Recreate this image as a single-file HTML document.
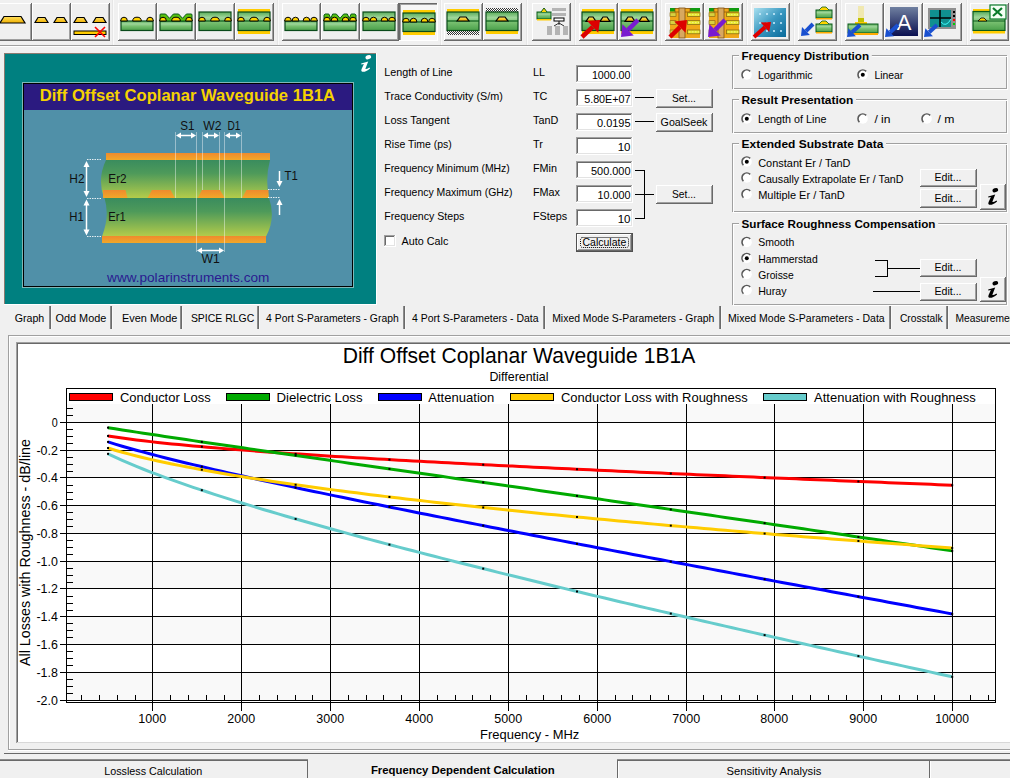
<!DOCTYPE html>
<html><head><meta charset="utf-8"><title>Frequency Dependent Calculation</title>
<style>html,body{margin:0;padding:0;background:#f0f0f0;overflow:hidden}body{width:1010px;height:778px;font-family:"Liberation Sans",sans-serif}svg{display:block}</style>
</head><body>
<svg width="1010" height="778" viewBox="0 0 1010 778" font-family='"Liberation Sans", sans-serif'><rect x="0" y="0" width="1010" height="778" fill="#f0f0f0" />
<rect x="-7" y="3" width="39" height="38" fill="#f0f0f0" />
<rect x="-7" y="3" width="39" height="1" fill="#ffffff" />
<rect x="-7" y="3" width="1" height="38" fill="#ffffff" />
<rect x="-7" y="40" width="39" height="1" fill="#696969" />
<rect x="31" y="3" width="1" height="38" fill="#696969" />
<rect x="-6" y="39" width="37" height="1" fill="#a0a0a0" />
<rect x="30" y="4" width="1" height="36" fill="#a0a0a0" />
<rect x="32" y="3" width="39" height="38" fill="#f0f0f0" />
<rect x="32" y="3" width="39" height="1" fill="#ffffff" />
<rect x="32" y="3" width="1" height="38" fill="#ffffff" />
<rect x="32" y="40" width="39" height="1" fill="#696969" />
<rect x="70" y="3" width="1" height="38" fill="#696969" />
<rect x="33" y="39" width="37" height="1" fill="#a0a0a0" />
<rect x="69" y="4" width="1" height="36" fill="#a0a0a0" />
<rect x="71" y="3" width="39" height="38" fill="#f0f0f0" />
<rect x="71" y="3" width="39" height="1" fill="#ffffff" />
<rect x="71" y="3" width="1" height="38" fill="#ffffff" />
<rect x="71" y="40" width="39" height="1" fill="#696969" />
<rect x="109" y="3" width="1" height="38" fill="#696969" />
<rect x="72" y="39" width="37" height="1" fill="#a0a0a0" />
<rect x="108" y="4" width="1" height="36" fill="#a0a0a0" />
<rect x="118" y="3" width="39" height="38" fill="#f0f0f0" />
<rect x="118" y="3" width="39" height="1" fill="#ffffff" />
<rect x="118" y="3" width="1" height="38" fill="#ffffff" />
<rect x="118" y="40" width="39" height="1" fill="#696969" />
<rect x="156" y="3" width="1" height="38" fill="#696969" />
<rect x="119" y="39" width="37" height="1" fill="#a0a0a0" />
<rect x="155" y="4" width="1" height="36" fill="#a0a0a0" />
<rect x="157" y="3" width="39" height="38" fill="#f0f0f0" />
<rect x="157" y="3" width="39" height="1" fill="#ffffff" />
<rect x="157" y="3" width="1" height="38" fill="#ffffff" />
<rect x="157" y="40" width="39" height="1" fill="#696969" />
<rect x="195" y="3" width="1" height="38" fill="#696969" />
<rect x="158" y="39" width="37" height="1" fill="#a0a0a0" />
<rect x="194" y="4" width="1" height="36" fill="#a0a0a0" />
<rect x="196" y="3" width="39" height="38" fill="#f0f0f0" />
<rect x="196" y="3" width="39" height="1" fill="#ffffff" />
<rect x="196" y="3" width="1" height="38" fill="#ffffff" />
<rect x="196" y="40" width="39" height="1" fill="#696969" />
<rect x="234" y="3" width="1" height="38" fill="#696969" />
<rect x="197" y="39" width="37" height="1" fill="#a0a0a0" />
<rect x="233" y="4" width="1" height="36" fill="#a0a0a0" />
<rect x="235" y="3" width="39" height="38" fill="#f0f0f0" />
<rect x="235" y="3" width="39" height="1" fill="#ffffff" />
<rect x="235" y="3" width="1" height="38" fill="#ffffff" />
<rect x="235" y="40" width="39" height="1" fill="#696969" />
<rect x="273" y="3" width="1" height="38" fill="#696969" />
<rect x="236" y="39" width="37" height="1" fill="#a0a0a0" />
<rect x="272" y="4" width="1" height="36" fill="#a0a0a0" />
<rect x="282" y="3" width="39" height="38" fill="#f0f0f0" />
<rect x="282" y="3" width="39" height="1" fill="#ffffff" />
<rect x="282" y="3" width="1" height="38" fill="#ffffff" />
<rect x="282" y="40" width="39" height="1" fill="#696969" />
<rect x="320" y="3" width="1" height="38" fill="#696969" />
<rect x="283" y="39" width="37" height="1" fill="#a0a0a0" />
<rect x="319" y="4" width="1" height="36" fill="#a0a0a0" />
<rect x="321" y="3" width="39" height="38" fill="#f0f0f0" />
<rect x="321" y="3" width="39" height="1" fill="#ffffff" />
<rect x="321" y="3" width="1" height="38" fill="#ffffff" />
<rect x="321" y="40" width="39" height="1" fill="#696969" />
<rect x="359" y="3" width="1" height="38" fill="#696969" />
<rect x="322" y="39" width="37" height="1" fill="#a0a0a0" />
<rect x="358" y="4" width="1" height="36" fill="#a0a0a0" />
<rect x="360" y="3" width="39" height="38" fill="#f0f0f0" />
<rect x="360" y="3" width="39" height="1" fill="#ffffff" />
<rect x="360" y="3" width="1" height="38" fill="#ffffff" />
<rect x="360" y="40" width="39" height="1" fill="#696969" />
<rect x="398" y="3" width="1" height="38" fill="#696969" />
<rect x="361" y="39" width="37" height="1" fill="#a0a0a0" />
<rect x="397" y="4" width="1" height="36" fill="#a0a0a0" />
<rect x="399" y="3" width="39" height="38" fill="#f6f6f6" />
<rect x="399" y="3" width="39" height="1" fill="#696969" />
<rect x="399" y="3" width="1" height="38" fill="#696969" />
<rect x="400" y="4" width="37" height="1" fill="#a0a0a0" />
<rect x="400" y="4" width="1" height="36" fill="#a0a0a0" />
<rect x="399" y="40" width="39" height="1" fill="#ffffff" />
<rect x="437" y="3" width="1" height="38" fill="#ffffff" />
<rect x="444" y="3" width="39" height="38" fill="#f0f0f0" />
<rect x="444" y="3" width="39" height="1" fill="#ffffff" />
<rect x="444" y="3" width="1" height="38" fill="#ffffff" />
<rect x="444" y="40" width="39" height="1" fill="#696969" />
<rect x="482" y="3" width="1" height="38" fill="#696969" />
<rect x="445" y="39" width="37" height="1" fill="#a0a0a0" />
<rect x="481" y="4" width="1" height="36" fill="#a0a0a0" />
<rect x="483" y="3" width="39" height="38" fill="#f0f0f0" />
<rect x="483" y="3" width="39" height="1" fill="#ffffff" />
<rect x="483" y="3" width="1" height="38" fill="#ffffff" />
<rect x="483" y="40" width="39" height="1" fill="#696969" />
<rect x="521" y="3" width="1" height="38" fill="#696969" />
<rect x="484" y="39" width="37" height="1" fill="#a0a0a0" />
<rect x="520" y="4" width="1" height="36" fill="#a0a0a0" />
<rect x="532" y="3" width="39" height="38" fill="#f0f0f0" />
<rect x="532" y="3" width="39" height="1" fill="#ffffff" />
<rect x="532" y="3" width="1" height="38" fill="#ffffff" />
<rect x="532" y="40" width="39" height="1" fill="#696969" />
<rect x="570" y="3" width="1" height="38" fill="#696969" />
<rect x="533" y="39" width="37" height="1" fill="#a0a0a0" />
<rect x="569" y="4" width="1" height="36" fill="#a0a0a0" />
<rect x="579" y="3" width="39" height="38" fill="#f0f0f0" />
<rect x="579" y="3" width="39" height="1" fill="#ffffff" />
<rect x="579" y="3" width="1" height="38" fill="#ffffff" />
<rect x="579" y="40" width="39" height="1" fill="#696969" />
<rect x="617" y="3" width="1" height="38" fill="#696969" />
<rect x="580" y="39" width="37" height="1" fill="#a0a0a0" />
<rect x="616" y="4" width="1" height="36" fill="#a0a0a0" />
<rect x="618" y="3" width="39" height="38" fill="#f0f0f0" />
<rect x="618" y="3" width="39" height="1" fill="#ffffff" />
<rect x="618" y="3" width="1" height="38" fill="#ffffff" />
<rect x="618" y="40" width="39" height="1" fill="#696969" />
<rect x="656" y="3" width="1" height="38" fill="#696969" />
<rect x="619" y="39" width="37" height="1" fill="#a0a0a0" />
<rect x="655" y="4" width="1" height="36" fill="#a0a0a0" />
<rect x="665" y="3" width="39" height="38" fill="#f0f0f0" />
<rect x="665" y="3" width="39" height="1" fill="#ffffff" />
<rect x="665" y="3" width="1" height="38" fill="#ffffff" />
<rect x="665" y="40" width="39" height="1" fill="#696969" />
<rect x="703" y="3" width="1" height="38" fill="#696969" />
<rect x="666" y="39" width="37" height="1" fill="#a0a0a0" />
<rect x="702" y="4" width="1" height="36" fill="#a0a0a0" />
<rect x="704" y="3" width="39" height="38" fill="#f0f0f0" />
<rect x="704" y="3" width="39" height="1" fill="#ffffff" />
<rect x="704" y="3" width="1" height="38" fill="#ffffff" />
<rect x="704" y="40" width="39" height="1" fill="#696969" />
<rect x="742" y="3" width="1" height="38" fill="#696969" />
<rect x="705" y="39" width="37" height="1" fill="#a0a0a0" />
<rect x="741" y="4" width="1" height="36" fill="#a0a0a0" />
<rect x="751" y="3" width="39" height="38" fill="#f0f0f0" />
<rect x="751" y="3" width="39" height="1" fill="#ffffff" />
<rect x="751" y="3" width="1" height="38" fill="#ffffff" />
<rect x="751" y="40" width="39" height="1" fill="#696969" />
<rect x="789" y="3" width="1" height="38" fill="#696969" />
<rect x="752" y="39" width="37" height="1" fill="#a0a0a0" />
<rect x="788" y="4" width="1" height="36" fill="#a0a0a0" />
<rect x="798" y="3" width="39" height="38" fill="#f0f0f0" />
<rect x="798" y="3" width="39" height="1" fill="#ffffff" />
<rect x="798" y="3" width="1" height="38" fill="#ffffff" />
<rect x="798" y="40" width="39" height="1" fill="#696969" />
<rect x="836" y="3" width="1" height="38" fill="#696969" />
<rect x="799" y="39" width="37" height="1" fill="#a0a0a0" />
<rect x="835" y="4" width="1" height="36" fill="#a0a0a0" />
<rect x="845" y="3" width="39" height="38" fill="#f0f0f0" />
<rect x="845" y="3" width="39" height="1" fill="#ffffff" />
<rect x="845" y="3" width="1" height="38" fill="#ffffff" />
<rect x="845" y="40" width="39" height="1" fill="#696969" />
<rect x="883" y="3" width="1" height="38" fill="#696969" />
<rect x="846" y="39" width="37" height="1" fill="#a0a0a0" />
<rect x="882" y="4" width="1" height="36" fill="#a0a0a0" />
<rect x="884" y="3" width="39" height="38" fill="#f0f0f0" />
<rect x="884" y="3" width="39" height="1" fill="#ffffff" />
<rect x="884" y="3" width="1" height="38" fill="#ffffff" />
<rect x="884" y="40" width="39" height="1" fill="#696969" />
<rect x="922" y="3" width="1" height="38" fill="#696969" />
<rect x="885" y="39" width="37" height="1" fill="#a0a0a0" />
<rect x="921" y="4" width="1" height="36" fill="#a0a0a0" />
<rect x="923" y="3" width="39" height="38" fill="#f0f0f0" />
<rect x="923" y="3" width="39" height="1" fill="#ffffff" />
<rect x="923" y="3" width="1" height="38" fill="#ffffff" />
<rect x="923" y="40" width="39" height="1" fill="#696969" />
<rect x="961" y="3" width="1" height="38" fill="#696969" />
<rect x="924" y="39" width="37" height="1" fill="#a0a0a0" />
<rect x="960" y="4" width="1" height="36" fill="#a0a0a0" />
<rect x="970" y="3" width="39" height="38" fill="#f0f0f0" />
<rect x="970" y="3" width="39" height="1" fill="#ffffff" />
<rect x="970" y="3" width="1" height="38" fill="#ffffff" />
<rect x="970" y="40" width="39" height="1" fill="#696969" />
<rect x="1008" y="3" width="1" height="38" fill="#696969" />
<rect x="971" y="39" width="37" height="1" fill="#a0a0a0" />
<rect x="1007" y="4" width="1" height="36" fill="#a0a0a0" />
<rect x="112" y="0" width="1" height="45" fill="#e6e6e6" />
<rect x="113" y="0" width="1" height="45" fill="#fafafa" />
<rect x="277" y="0" width="1" height="45" fill="#e6e6e6" />
<rect x="278" y="0" width="1" height="45" fill="#fafafa" />
<rect x="440" y="0" width="1" height="45" fill="#e6e6e6" />
<rect x="441" y="0" width="1" height="45" fill="#fafafa" />
<rect x="526" y="0" width="1" height="45" fill="#e6e6e6" />
<rect x="527" y="0" width="1" height="45" fill="#fafafa" />
<rect x="574" y="0" width="1" height="45" fill="#e6e6e6" />
<rect x="575" y="0" width="1" height="45" fill="#fafafa" />
<rect x="660" y="0" width="1" height="45" fill="#e6e6e6" />
<rect x="661" y="0" width="1" height="45" fill="#fafafa" />
<rect x="746" y="0" width="1" height="45" fill="#e6e6e6" />
<rect x="747" y="0" width="1" height="45" fill="#fafafa" />
<rect x="793" y="0" width="1" height="45" fill="#e6e6e6" />
<rect x="794" y="0" width="1" height="45" fill="#fafafa" />
<rect x="840" y="0" width="1" height="45" fill="#e6e6e6" />
<rect x="841" y="0" width="1" height="45" fill="#fafafa" />
<rect x="966" y="0" width="1" height="45" fill="#e6e6e6" />
<rect x="967" y="0" width="1" height="45" fill="#fafafa" />
<rect x="0" y="45" width="1010" height="1" fill="#a0a0a0" />
<rect x="0" y="46" width="1010" height="1" fill="#ffffff" />
<polygon points="0,23 4,16.5 21,16.5 25,23" fill="url(#gy)" stroke="#000" stroke-width="1.2"/>
<polygon points="35,22.5 38,17.5 45,17.5 48,22.5" fill="url(#gy)" stroke="#000" stroke-width="1.2"/>
<polygon points="54,22.5 57,17.5 64,17.5 67,22.5" fill="url(#gy)" stroke="#000" stroke-width="1.2"/>
<polygon points="74,22.5 77,17.5 84,17.5 87,22.5" fill="url(#gy)" stroke="#000" stroke-width="1.2"/>
<polygon points="93,22.5 96,17.5 103,17.5 106,22.5" fill="url(#gy)" stroke="#000" stroke-width="1.2"/>
<rect x="74" y="31" width="32" height="3.5" fill="#ffcc00" stroke="#000" stroke-width="1"/>
<path d="M95,27 L105,37 M105,27 L95,37" stroke="#ff0000" stroke-width="1.6"/>
<rect x="121" y="21" width="32" height="9.5" fill="url(#gg)" stroke="#0a4a1a" stroke-width="1.2"/><path d="M120.6,21 A3.4,3.8 0 0 1 127.4,21 z" fill="#ffd400" stroke="#000" stroke-width="1"/><path d="M132.7,21 A4.3,3.8 0 0 1 141.3,21 z" fill="#ffd400" stroke="#000" stroke-width="1"/><path d="M146.6,21 A3.4,3.8 0 0 1 153.4,21 z" fill="#ffd400" stroke="#000" stroke-width="1"/>
<rect x="160" y="21" width="32" height="9.5" fill="url(#gg)" stroke="#0a4a1a" stroke-width="1.2"/><path d="M160,21 L160,15 L160.4,14 L165.6,14 L169.5,18.3 L173.4,14 L178.6,14 L182.5,18.3 L186.4,14 L191.6,14 L192,15 L192,21 z" fill="#58c010" stroke="#0a5a1a" stroke-width="1" stroke-linejoin="round"/><path d="M159.6,21 A3.4,3.8 0 0 1 166.4,21 z" fill="#ffd400" stroke="#000" stroke-width="1"/><path d="M171.7,21 A4.3,3.8 0 0 1 180.3,21 z" fill="#ffd400" stroke="#000" stroke-width="1"/><path d="M185.6,21 A3.4,3.8 0 0 1 192.4,21 z" fill="#ffd400" stroke="#000" stroke-width="1"/>
<rect x="199" y="12" width="32" height="18.5" fill="url(#gg)" stroke="#0a4a1a" stroke-width="1.2"/><line x1="199" y1="21" x2="231" y2="21" stroke="#0a5a1a" stroke-width="1.2"/><path d="M198.6,21 A3.4,3.8 0 0 1 205.4,21 z" fill="#ffd400" stroke="#000" stroke-width="1"/><path d="M210.7,21 A4.3,3.8 0 0 1 219.3,21 z" fill="#ffd400" stroke="#000" stroke-width="1"/><path d="M224.6,21 A3.4,3.8 0 0 1 231.4,21 z" fill="#ffd400" stroke="#000" stroke-width="1"/>
<rect x="238" y="9" width="32" height="3" fill="#ffcc00"/><rect x="238" y="31" width="32" height="3" fill="#ffcc00"/><rect x="238" y="12" width="32" height="18.5" fill="url(#gg)" stroke="#0a4a1a" stroke-width="1.2"/><line x1="238" y1="21" x2="270" y2="21" stroke="#0a5a1a" stroke-width="1.2"/><path d="M237.6,21 A3.4,3.8 0 0 1 244.4,21 z" fill="#ffd400" stroke="#000" stroke-width="1"/><path d="M249.7,21 A4.3,3.8 0 0 1 258.3,21 z" fill="#ffd400" stroke="#000" stroke-width="1"/><path d="M263.6,21 A3.4,3.8 0 0 1 270.4,21 z" fill="#ffd400" stroke="#000" stroke-width="1"/>
<rect x="285" y="21" width="32" height="9.5" fill="url(#gg)" stroke="#0a4a1a" stroke-width="1.2"/><path d="M284.6,21 A3.4,3.8 0 0 1 291.4,21 z" fill="#ffd400" stroke="#000" stroke-width="1"/><path d="M292.1,21 A3.4,3.8 0 0 1 298.9,21 z" fill="#ffd400" stroke="#000" stroke-width="1"/><path d="M303.1,21 A3.4,3.8 0 0 1 309.9,21 z" fill="#ffd400" stroke="#000" stroke-width="1"/><path d="M310.6,21 A3.4,3.8 0 0 1 317.4,21 z" fill="#ffd400" stroke="#000" stroke-width="1"/>
<rect x="324" y="21" width="32" height="9.5" fill="url(#gg)" stroke="#0a4a1a" stroke-width="1.2"/><path d="M324,21 L324,15 L325.2,14 L328.8,14 L330.75,18.3 L332.7,14 L336.3,14 L340.0,18.3 L343.7,14 L347.3,14 L349.25,18.3 L351.2,14 L354.8,14 L356,15 L356,21 z" fill="#58c010" stroke="#0a5a1a" stroke-width="1" stroke-linejoin="round"/><path d="M323.6,21 A3.4,3.8 0 0 1 330.4,21 z" fill="#ffd400" stroke="#000" stroke-width="1"/><path d="M331.1,21 A3.4,3.8 0 0 1 337.9,21 z" fill="#ffd400" stroke="#000" stroke-width="1"/><path d="M342.1,21 A3.4,3.8 0 0 1 348.9,21 z" fill="#ffd400" stroke="#000" stroke-width="1"/><path d="M349.6,21 A3.4,3.8 0 0 1 356.4,21 z" fill="#ffd400" stroke="#000" stroke-width="1"/>
<rect x="363" y="12" width="32" height="18.5" fill="url(#gg)" stroke="#0a4a1a" stroke-width="1.2"/><line x1="363" y1="21" x2="395" y2="21" stroke="#0a5a1a" stroke-width="1.2"/><path d="M362.6,21 A3.4,3.8 0 0 1 369.4,21 z" fill="#ffd400" stroke="#000" stroke-width="1"/><path d="M370.1,21 A3.4,3.8 0 0 1 376.9,21 z" fill="#ffd400" stroke="#000" stroke-width="1"/><path d="M381.1,21 A3.4,3.8 0 0 1 387.9,21 z" fill="#ffd400" stroke="#000" stroke-width="1"/><path d="M388.6,21 A3.4,3.8 0 0 1 395.4,21 z" fill="#ffd400" stroke="#000" stroke-width="1"/>
<rect x="403" y="10" width="32" height="3" fill="#ffcc00"/><rect x="403" y="32" width="32" height="3" fill="#ffcc00"/><rect x="403" y="13" width="32" height="18.5" fill="url(#gg)" stroke="#0a4a1a" stroke-width="1.2"/><line x1="403" y1="22" x2="435" y2="22" stroke="#0a5a1a" stroke-width="1.2"/><path d="M402.6,22 A3.4,3.8 0 0 1 409.4,22 z" fill="#ffd400" stroke="#000" stroke-width="1"/><path d="M410.1,22 A3.4,3.8 0 0 1 416.9,22 z" fill="#ffd400" stroke="#000" stroke-width="1"/><path d="M421.1,22 A3.4,3.8 0 0 1 427.9,22 z" fill="#ffd400" stroke="#000" stroke-width="1"/><path d="M428.6,22 A3.4,3.8 0 0 1 435.4,22 z" fill="#ffd400" stroke="#000" stroke-width="1"/>
<rect x="447" y="9" width="32" height="3" fill="#ffcc00"/><rect x="447" y="31" width="32" height="4" fill="url(#hatch)"/><rect x="447" y="12" width="32" height="18.5" fill="url(#gg)" stroke="#0a4a1a" stroke-width="1.2"/><line x1="447" y1="21" x2="479" y2="21" stroke="#0a5a1a" stroke-width="1.2"/><polygon points="457.0,21 460.0,17 466.0,17 469.0,21" fill="url(#gy)" stroke="#000" stroke-width="1.2"/>
<rect x="486" y="8" width="32" height="4" fill="url(#hatch)"/><rect x="486" y="31" width="32" height="3" fill="#ffcc00"/><rect x="486" y="12" width="32" height="18.5" fill="url(#gg)" stroke="#0a4a1a" stroke-width="1.2"/><line x1="486" y1="21" x2="518" y2="21" stroke="#0a5a1a" stroke-width="1.2"/><polygon points="496.0,21 499.0,17 505.0,17 508.0,21" fill="url(#gy)" stroke="#000" stroke-width="1.2"/>
<rect x="537" y="12" width="14" height="7" fill="url(#gg)" stroke="#0a5a1a" stroke-width="1"/>
<rect x="537" y="19" width="14" height="1.5" fill="#ffcc00"/>
<path d="M541,12 l3,-4 l3,4" fill="#ffd400" stroke="#0a5a1a" stroke-width="1"/>
<rect x="552" y="8" width="14" height="3" fill="#b4b4b4"/><rect x="552" y="13" width="14" height="3" fill="#b4b4b4"/>
<rect x="554" y="18" width="10" height="3" fill="#fff" stroke="#000" stroke-width="1"/>
<path d="M559,21 v4 M559,23 l-5,3 M559,23 l5,3" stroke="#000" stroke-width="0.8" fill="none"/>
<rect x="547" y="26" width="5" height="9" fill="#b4b4b4"/><rect x="555" y="26" width="5" height="9" fill="#b4b4b4"/><rect x="563" y="26" width="5" height="9" fill="#b4b4b4"/>
<rect x="582" y="9" width="32" height="3" fill="#ffcc00"/><rect x="582" y="31" width="32" height="3" fill="#ffcc00"/><rect x="582" y="12" width="32" height="18.5" fill="url(#gg)" stroke="#0a4a1a" stroke-width="1.2"/><line x1="582" y1="21" x2="614" y2="21" stroke="#0a5a1a" stroke-width="1.2"/><polygon points="586,21.3 589,17 593,17 596,21.3" fill="url(#gy)" stroke="#000" stroke-width="1.2"/><polygon points="600,21.3 603,17 607,17 610,21.3" fill="url(#gy)" stroke="#000" stroke-width="1.2"/>
<line x1="582" y1="37" x2="592.7298684745018" y2="26.866235329637163" stroke="#dd0000" stroke-width="4.5"/><polygon points="600,20 598.2228567382116,32.682340550035704 587.236880210792,21.050130109238623" fill="#dd0000"/>
<rect x="621" y="9" width="32" height="3" fill="#ffcc00"/><rect x="621" y="31" width="32" height="3" fill="#ffcc00"/><rect x="621" y="12" width="32" height="18.5" fill="url(#gg)" stroke="#0a4a1a" stroke-width="1.2"/><line x1="621" y1="21" x2="653" y2="21" stroke="#0a5a1a" stroke-width="1.2"/><polygon points="625,21.3 628,17 632,17 635,21.3" fill="url(#gy)" stroke="#000" stroke-width="1.2"/><polygon points="639,21.3 642,17 646,17 649,21.3" fill="url(#gy)" stroke="#000" stroke-width="1.2"/>
<line x1="638" y1="20" x2="628.0710678118654" y2="29.928932188134524" stroke="#7a1ad0" stroke-width="4.5"/><polygon points="621,37 622.414213562373,24.272077938642145 633.7279220613578,35.58578643762691" fill="#7a1ad0"/>
<rect x="670" y="8" width="30" height="30" fill="#f0a818"/>
<rect x="670" y="8" width="6" height="3.5" fill="#109a10"/><rect x="690" y="8" width="10" height="3.5" fill="#109a10"/>
<rect x="675" y="8.5" width="15" height="3.5" fill="#f0a818" stroke="#805010" stroke-width="0.7"/>
<rect x="670" y="12.8" width="6" height="3.6" fill="#d8d040" stroke="#806010" stroke-width="0.6"/><rect x="687.5" y="12.8" width="12.5" height="3.8" fill="#e8e830" stroke="#806010" stroke-width="0.7"/>
<line x1="689" y1="14.700000000000001" x2="699" y2="14.700000000000001" stroke="#f8f8c0" stroke-width="0.6" stroke-dasharray="1.5,1.5"/>
<rect x="670" y="20.7" width="6" height="3.6" fill="#d8d040" stroke="#806010" stroke-width="0.6"/><rect x="687.5" y="20.7" width="12.5" height="3.8" fill="#e8e830" stroke="#806010" stroke-width="0.7"/>
<line x1="689" y1="22.599999999999998" x2="699" y2="22.599999999999998" stroke="#f8f8c0" stroke-width="0.6" stroke-dasharray="1.5,1.5"/>
<rect x="670" y="30" width="6" height="3.6" fill="#d8d040" stroke="#806010" stroke-width="0.6"/><rect x="687.5" y="30" width="12.5" height="3.8" fill="#e8e830" stroke="#806010" stroke-width="0.7"/>
<line x1="689" y1="31.9" x2="699" y2="31.9" stroke="#f8f8c0" stroke-width="0.6" stroke-dasharray="1.5,1.5"/>
<rect x="679" y="8" width="6" height="30" fill="#d8a860" stroke="#805010" stroke-width="0.8"/>
<line x1="670" y1="37" x2="679.9289321881345" y2="27.071067811865476" stroke="#dd0000" stroke-width="4.5"/><polygon points="687,20 685.5857864376269,32.72792206135786 674.272077938642,21.414213562373096" fill="#dd0000"/>
<rect x="709" y="8" width="30" height="30" fill="#f0a818"/>
<rect x="709" y="8" width="6" height="3.5" fill="#109a10"/><rect x="729" y="8" width="10" height="3.5" fill="#109a10"/>
<rect x="714" y="8.5" width="15" height="3.5" fill="#f0a818" stroke="#805010" stroke-width="0.7"/>
<rect x="709" y="12.8" width="6" height="3.6" fill="#d8d040" stroke="#806010" stroke-width="0.6"/><rect x="726.5" y="12.8" width="12.5" height="3.8" fill="#e8e830" stroke="#806010" stroke-width="0.7"/>
<line x1="728" y1="14.700000000000001" x2="738" y2="14.700000000000001" stroke="#f8f8c0" stroke-width="0.6" stroke-dasharray="1.5,1.5"/>
<rect x="709" y="20.7" width="6" height="3.6" fill="#d8d040" stroke="#806010" stroke-width="0.6"/><rect x="726.5" y="20.7" width="12.5" height="3.8" fill="#e8e830" stroke="#806010" stroke-width="0.7"/>
<line x1="728" y1="22.599999999999998" x2="738" y2="22.599999999999998" stroke="#f8f8c0" stroke-width="0.6" stroke-dasharray="1.5,1.5"/>
<rect x="709" y="30" width="6" height="3.6" fill="#d8d040" stroke="#806010" stroke-width="0.6"/><rect x="726.5" y="30" width="12.5" height="3.8" fill="#e8e830" stroke="#806010" stroke-width="0.7"/>
<line x1="728" y1="31.9" x2="738" y2="31.9" stroke="#f8f8c0" stroke-width="0.6" stroke-dasharray="1.5,1.5"/>
<rect x="718" y="8" width="6" height="30" fill="#d8a860" stroke="#805010" stroke-width="0.8"/>
<line x1="725" y1="20" x2="715.0710678118654" y2="29.928932188134524" stroke="#7a1ad0" stroke-width="4.5"/><polygon points="708,37 709.414213562373,24.272077938642145 720.7279220613578,35.58578643762691" fill="#7a1ad0"/>
<defs><linearGradient id="bb" x1="0" y1="0" x2="1" y2="1"><stop offset="0" stop-color="#a8e0f0"/><stop offset="0.5" stop-color="#3a98c0"/><stop offset="1" stop-color="#0a6a9a"/></linearGradient></defs>
<rect x="754" y="8" width="32" height="29" fill="url(#bb)"/>
<circle cx="760" cy="14" r="1" fill="#cfefff"/>
<circle cx="767" cy="14" r="1" fill="#cfefff"/>
<circle cx="774" cy="14" r="1" fill="#cfefff"/>
<circle cx="781" cy="14" r="1" fill="#cfefff"/>
<circle cx="760" cy="23" r="1" fill="#cfefff"/>
<circle cx="767" cy="23" r="1" fill="#cfefff"/>
<circle cx="774" cy="23" r="1" fill="#cfefff"/>
<circle cx="781" cy="23" r="1" fill="#cfefff"/>
<circle cx="760" cy="31" r="1" fill="#cfefff"/>
<circle cx="767" cy="31" r="1" fill="#cfefff"/>
<circle cx="774" cy="31" r="1" fill="#cfefff"/>
<circle cx="781" cy="31" r="1" fill="#cfefff"/>
<line x1="754" y1="37" x2="765.0012971570793" y2="27.292973096694773" stroke="#dd0000" stroke-width="4"/><polygon points="771,22 769.2356756344351,32.09193537103137 760.7669186797235,22.49401082235818" fill="#dd0000"/>
<rect x="816" y="10" width="16" height="8" fill="url(#gg)" stroke="#0a5a1a" stroke-width="1"/>
<path d="M819,10 l3,-3 l4,0 l3,3" fill="#ffd400" stroke="#0a5a1a" stroke-width="0.8"/>
<rect x="816" y="18" width="16" height="1.5" fill="#ffaa00"/>
<rect x="816" y="24" width="16" height="8" fill="url(#gg)" stroke="#0a5a1a" stroke-width="1"/>
<path d="M819,24 l3,-3 l4,0 l3,3" fill="#ffd400" stroke="#0a5a1a" stroke-width="0.8"/>
<rect x="816" y="32" width="16" height="1.5" fill="#ffaa00"/>
<line x1="813" y1="24" x2="805.9497474683059" y2="31.050252531694166" stroke="#1a50d0" stroke-width="4"/><polygon points="801,36 801.9899494936612,27.0904545570495 809.9095454429505,35.01005050633883" fill="#1a50d0"/>
<rect x="858" y="6" width="6" height="12" fill="#f0e8b0"/>
<rect x="858" y="18" width="6" height="4" fill="#c0c000"/>
<rect x="855" y="22" width="12" height="2" fill="#ffcc00"/>
<rect x="848" y="24" width="30" height="9" fill="url(#gg)" stroke="#0a5a1a" stroke-width="1"/>
<rect x="848" y="33" width="30" height="2" fill="#ffaa00"/>
<line x1="860" y1="25" x2="852.1436241123924" y2="32.252039280868544" stroke="#1a50d0" stroke-width="4"/><polygon points="847,37 848.3452555370873,28.137139990954612 855.9419926876976,36.36693857078248" fill="#1a50d0"/>
<defs><linearGradient id="na" x1="0" y1="0" x2="0" y2="1"><stop offset="0" stop-color="#7080a0"/><stop offset="1" stop-color="#0a1050"/></linearGradient></defs>
<rect x="890" y="7" width="28" height="29" fill="url(#na)"/>
<text x="904" y="30" font-size="22" font-weight="400" fill="#fff" text-anchor="middle">A</text>
<line x1="898" y1="25" x2="890.1436241123924" y2="32.252039280868544" stroke="#1a50d0" stroke-width="4"/><polygon points="885,37 886.3452555370873,28.137139990954612 893.9419926876976,36.36693857078248" fill="#1a50d0"/>
<rect x="928" y="8" width="28" height="21" fill="#909090"/>
<rect x="930" y="10" width="21" height="17" fill="#109090"/>
<path d="M940,10 v17 M930,18 h21" stroke="#000" stroke-width="1.5"/>
<path d="M941,22 q5,6 10,-3" stroke="#40ffff" stroke-width="1" fill="none"/>
<rect x="953" y="11" width="2" height="2" fill="#000"/><rect x="953" y="15" width="2" height="2" fill="#000"/><rect x="953" y="19" width="2" height="2" fill="#ff0000"/><rect x="953" y="23" width="2" height="2" fill="#00cc00"/>
<line x1="937" y1="25" x2="929.1436241123924" y2="32.252039280868544" stroke="#1a50d0" stroke-width="4"/><polygon points="924,37 925.3452555370873,28.137139990954612 932.9419926876976,36.36693857078248" fill="#1a50d0"/>
<rect x="973" y="9" width="32" height="2.5" fill="#ffcc00"/>
<rect x="973" y="11.5" width="32" height="19" fill="url(#gg)" stroke="#0a5a1a" stroke-width="1.2"/>
<line x1="973" y1="21" x2="1005" y2="21" stroke="#0a5a1a" stroke-width="1"/>
<path d="M978,21 l3,-3 l3,0 l3,3 z" fill="#ffd400" stroke="#000" stroke-width="0.8"/>
<rect x="973" y="31" width="32" height="2.5" fill="#ffcc00"/>
<rect x="990" y="5" width="16" height="14" fill="#f4fff4" stroke="#0a7a2a" stroke-width="1.2"/>
<path d="M993,8 l9,8 M1002,8 l-9,8" stroke="#0a7a2a" stroke-width="2.2"/>
<rect x="4" y="53" width="372" height="251" fill="#008080" />
<rect x="4" y="53" width="372" height="1" fill="#8a7a70" />
<rect x="4" y="53" width="1" height="251" fill="#8a7a70" />
<rect x="4" y="304" width="373" height="1" fill="#ffffff" />
<rect x="376" y="53" width="1" height="252" fill="#ffffff" />
<g transform="translate(360,55) scale(1.0)" fill="#ffffff"><ellipse cx="8.3" cy="2.2" rx="2.9" ry="2.0" transform="rotate(-20 8.3 2.2)"/><path d="M1.2,8.4 L8.2,6.6 L5.4,13.8 Q5.9,14.7 9.5,12.4 L10.1,13.4 Q5.6,17.3 2.3,16.8 Q0.7,16.2 1.5,14.2 L3.9,9.1 L1.3,9.5 z"/></g>
<rect x="24" y="84" width="1" height="202" fill="#78acc4" />
<rect x="22" y="82" width="332" height="206" fill="#7fb8b8" />
<rect x="23" y="83" width="330" height="204" fill="#000000" />
<rect x="24" y="84" width="328" height="26" fill="#2b1a80" />
<rect x="24" y="110" width="328" height="176" fill="#5090a8" />
<text x="39.7" y="101.2" font-size="16" font-weight="700" fill="#f5d200" text-anchor="start"  textLength="295.4" lengthAdjust="spacingAndGlyphs">Diff Offset Coplanar Waveguide 1B1A</text>
<defs>
<linearGradient id="gy" x1="0" y1="0" x2="0" y2="1"><stop offset="0" stop-color="#ffe060"/><stop offset="1" stop-color="#f0b000"/></linearGradient>
<linearGradient id="gg" x1="0" y1="0" x2="0" y2="1"><stop offset="0" stop-color="#5aac5a"/><stop offset="0.3" stop-color="#9ed69a"/><stop offset="0.55" stop-color="#78c070"/><stop offset="1" stop-color="#4aa04a"/></linearGradient>
<pattern id="hatch" width="2" height="2" patternUnits="userSpaceOnUse"><rect width="2" height="2" fill="#fff"/><rect width="1" height="1" fill="#333"/><rect x="1" y="1" width="1" height="1" fill="#333"/></pattern>
<linearGradient id="cu" x1="0" y1="0" x2="0" y2="1"><stop offset="0" stop-color="#ee8a2e"/><stop offset="1" stop-color="#f2a828"/></linearGradient>
<linearGradient id="die" x1="0" y1="0" x2="0" y2="1"><stop offset="0" stop-color="#3a8c5e"/><stop offset="0.35" stop-color="#4e9a5a"/><stop offset="1" stop-color="#b4cc4a"/></linearGradient>
</defs>
<path d="M106,160 L270,160 Q265,179 269,198 L104,198 Q97,179 106,160 z" fill="url(#die)"/>
<path d="M104.5,198 L269,198 Q276,218 266,236.5 L102,236.5 Q110,216 104.5,198 z" fill="url(#die)"/>
<rect x="106" y="153" width="164" height="7" fill="url(#cu)"/>
<rect x="102" y="236" width="164" height="7" fill="url(#cu)"/>
<polygon points="103,198 103,190 125.5,190 127.5,198" fill="url(#cu)"/>
<polygon points="147.5,198 152,190 170.5,190 175,198" fill="url(#cu)"/>
<polygon points="197.7,198 202,190 220,190 224.7,198" fill="url(#cu)"/>
<polygon points="242,198 246.5,190 268.5,190 268.5,198" fill="url(#cu)"/>
<line x1="175.5" y1="132.5" x2="175.5" y2="198" stroke="#ffffff" stroke-width="1" stroke-dasharray="1,1" opacity="0.85"/>
<line x1="196.5" y1="132.5" x2="196.5" y2="252" stroke="#ffffff" stroke-width="1" stroke-dasharray="1,1" opacity="0.85"/>
<line x1="202.5" y1="132.5" x2="202.5" y2="190" stroke="#ffffff" stroke-width="1" stroke-dasharray="1,1" opacity="0.85"/>
<line x1="219.5" y1="132.5" x2="219.5" y2="190" stroke="#ffffff" stroke-width="1" stroke-dasharray="1,1" opacity="0.85"/>
<line x1="224.5" y1="132.5" x2="224.5" y2="252" stroke="#ffffff" stroke-width="1" stroke-dasharray="1,1" opacity="0.85"/>
<line x1="241.5" y1="132.5" x2="241.5" y2="198" stroke="#ffffff" stroke-width="1" stroke-dasharray="1,1" opacity="0.85"/>
<line x1="179" y1="135.5" x2="193" y2="135.5" stroke="#fff" stroke-width="1.5"/>
<polygon points="176,135.5 181,132.5 181,138.5" fill="#fff"/><polygon points="196,135.5 191,132.5 191,138.5" fill="#fff"/>
<line x1="206" y1="135.5" x2="216" y2="135.5" stroke="#fff" stroke-width="1.5"/>
<polygon points="203,135.5 208,132.5 208,138.5" fill="#fff"/><polygon points="219,135.5 214,132.5 214,138.5" fill="#fff"/>
<line x1="228" y1="135.5" x2="238" y2="135.5" stroke="#fff" stroke-width="1.5"/>
<polygon points="225,135.5 230,132.5 230,138.5" fill="#fff"/><polygon points="241,135.5 236,132.5 236,138.5" fill="#fff"/>
<line x1="200" y1="250.5" x2="221" y2="250.5" stroke="#fff" stroke-width="1.5"/>
<polygon points="197,250.5 202,247.5 202,253.5" fill="#fff"/><polygon points="224,250.5 219,247.5 219,253.5" fill="#fff"/>
<line x1="86.5" y1="164" x2="86.5" y2="194" stroke="#fff" stroke-width="1.5"/>
<polygon points="86.5,161 83.5,167 89.5,167" fill="#fff"/>
<polygon points="86.5,197 83.5,191 89.5,191" fill="#fff"/>
<line x1="86.5" y1="202.5" x2="86.5" y2="232.5" stroke="#fff" stroke-width="1.5"/>
<polygon points="86.5,199.5 83.5,205.5 89.5,205.5" fill="#fff"/>
<polygon points="86.5,235.5 83.5,229.5 89.5,229.5" fill="#fff"/>
<line x1="87" y1="159.5" x2="101" y2="159.5" stroke="#ffffff" stroke-width="1" stroke-dasharray="1.5,1" opacity="0.85"/>
<line x1="87" y1="198.5" x2="101" y2="198.5" stroke="#ffffff" stroke-width="1" stroke-dasharray="1.5,1" opacity="0.85"/>
<line x1="87" y1="236.5" x2="101" y2="236.5" stroke="#ffffff" stroke-width="1" stroke-dasharray="1.5,1" opacity="0.85"/>
<line x1="279.5" y1="171" x2="279.5" y2="184" stroke="#fff" stroke-width="1.5"/>
<polygon points="279.5,187 276.5,181 282.5,181" fill="#fff"/>
<line x1="279.5" y1="202" x2="279.5" y2="215" stroke="#fff" stroke-width="1.5"/>
<polygon points="279.5,199 276.5,205 282.5,205" fill="#fff"/>
<line x1="268" y1="189.5" x2="280" y2="189.5" stroke="#ffffff" stroke-width="1" stroke-dasharray="1.5,1" opacity="0.85"/>
<line x1="268" y1="197.5" x2="280" y2="197.5" stroke="#ffffff" stroke-width="1" stroke-dasharray="1.5,1" opacity="0.85"/>
<text x="69.3" y="182.8" font-size="12.2" font-weight="400" fill="#101010" text-anchor="start"  textLength="15.2" lengthAdjust="spacingAndGlyphs">H2</text>
<text x="108.3" y="182.8" font-size="12.2" font-weight="400" fill="#101010" text-anchor="start"  textLength="18.3" lengthAdjust="spacingAndGlyphs">Er2</text>
<text x="69.3" y="221.2" font-size="12.2" font-weight="400" fill="#101010" text-anchor="start"  textLength="14.5" lengthAdjust="spacingAndGlyphs">H1</text>
<text x="108.3" y="221.2" font-size="12.2" font-weight="400" fill="#101010" text-anchor="start"  textLength="17.5" lengthAdjust="spacingAndGlyphs">Er1</text>
<text x="180.2" y="130.1" font-size="12.2" font-weight="400" fill="#101010" text-anchor="start"  textLength="14.3" lengthAdjust="spacingAndGlyphs">S1</text>
<text x="203.2" y="130.1" font-size="12.2" font-weight="400" fill="#101010" text-anchor="start"  textLength="18.2" lengthAdjust="spacingAndGlyphs">W2</text>
<text x="227.4" y="130.1" font-size="12.2" font-weight="400" fill="#101010" text-anchor="start"  textLength="13.0" lengthAdjust="spacingAndGlyphs">D1</text>
<text x="284.6" y="179.6" font-size="12.6" font-weight="400" fill="#101010" text-anchor="start"  textLength="13.3" lengthAdjust="spacingAndGlyphs">T1</text>
<text x="210.6" y="263" font-size="12.2" font-weight="400" fill="#101010" text-anchor="middle" >W1</text>
<text x="107.1" y="282" font-size="13.5" font-weight="400" fill="#2a1a90" text-anchor="start"  textLength="162.2" lengthAdjust="spacingAndGlyphs">www.polarinstruments.com</text>
<text x="384.3" y="76" font-size="11.5" font-weight="400" fill="#000" text-anchor="start"  textLength="68.2" lengthAdjust="spacingAndGlyphs">Length of Line</text>
<text x="533" y="76" font-size="10.8" font-weight="400" fill="#000" text-anchor="start" >LL</text>
<rect x="576" y="65" width="57" height="18" fill="#ffffff" />
<rect x="576" y="65" width="57" height="1" fill="#a0a0a0" />
<rect x="576" y="65" width="1" height="18" fill="#a0a0a0" />
<rect x="577" y="66" width="55" height="1" fill="#696969" />
<rect x="577" y="66" width="1" height="16" fill="#696969" />
<rect x="576" y="82" width="57" height="1" fill="#ffffff" />
<rect x="632" y="65" width="1" height="18" fill="#ffffff" />
<rect x="577" y="81" width="55" height="1" fill="#e3e3e3" />
<rect x="631" y="66" width="1" height="16" fill="#e3e3e3" />
<text x="630.5" y="79" font-size="11.3" font-weight="400" fill="#000" text-anchor="end"  textLength="38.6" lengthAdjust="spacingAndGlyphs">1000.00</text>
<text x="384.3" y="100" font-size="11.5" font-weight="400" fill="#000" text-anchor="start"  textLength="118.5" lengthAdjust="spacingAndGlyphs">Trace Conductivity (S/m)</text>
<text x="533" y="100" font-size="10.8" font-weight="400" fill="#000" text-anchor="start" >TC</text>
<rect x="576" y="89" width="57" height="18" fill="#ffffff" />
<rect x="576" y="89" width="57" height="1" fill="#a0a0a0" />
<rect x="576" y="89" width="1" height="18" fill="#a0a0a0" />
<rect x="577" y="90" width="55" height="1" fill="#696969" />
<rect x="577" y="90" width="1" height="16" fill="#696969" />
<rect x="576" y="106" width="57" height="1" fill="#ffffff" />
<rect x="632" y="89" width="1" height="18" fill="#ffffff" />
<rect x="577" y="105" width="55" height="1" fill="#e3e3e3" />
<rect x="631" y="90" width="1" height="16" fill="#e3e3e3" />
<text x="630.5" y="103" font-size="11.3" font-weight="400" fill="#000" text-anchor="end"  textLength="46.3" lengthAdjust="spacingAndGlyphs">5.80E+07</text>
<text x="384.3" y="124" font-size="11.5" font-weight="400" fill="#000" text-anchor="start"  textLength="65.2" lengthAdjust="spacingAndGlyphs">Loss Tangent</text>
<text x="533" y="124" font-size="10.8" font-weight="400" fill="#000" text-anchor="start" >TanD</text>
<rect x="576" y="113" width="57" height="18" fill="#ffffff" />
<rect x="576" y="113" width="57" height="1" fill="#a0a0a0" />
<rect x="576" y="113" width="1" height="18" fill="#a0a0a0" />
<rect x="577" y="114" width="55" height="1" fill="#696969" />
<rect x="577" y="114" width="1" height="16" fill="#696969" />
<rect x="576" y="130" width="57" height="1" fill="#ffffff" />
<rect x="632" y="113" width="1" height="18" fill="#ffffff" />
<rect x="577" y="129" width="55" height="1" fill="#e3e3e3" />
<rect x="631" y="114" width="1" height="16" fill="#e3e3e3" />
<text x="630.5" y="127" font-size="11.3" font-weight="400" fill="#000" text-anchor="end"  textLength="33.5" lengthAdjust="spacingAndGlyphs">0.0195</text>
<text x="384.3" y="148" font-size="11.5" font-weight="400" fill="#000" text-anchor="start"  textLength="67.4" lengthAdjust="spacingAndGlyphs">Rise Time (ps)</text>
<text x="533" y="148" font-size="10.8" font-weight="400" fill="#000" text-anchor="start" >Tr</text>
<rect x="576" y="137" width="57" height="18" fill="#ffffff" />
<rect x="576" y="137" width="57" height="1" fill="#a0a0a0" />
<rect x="576" y="137" width="1" height="18" fill="#a0a0a0" />
<rect x="577" y="138" width="55" height="1" fill="#696969" />
<rect x="577" y="138" width="1" height="16" fill="#696969" />
<rect x="576" y="154" width="57" height="1" fill="#ffffff" />
<rect x="632" y="137" width="1" height="18" fill="#ffffff" />
<rect x="577" y="153" width="55" height="1" fill="#e3e3e3" />
<rect x="631" y="138" width="1" height="16" fill="#e3e3e3" />
<text x="630.5" y="151" font-size="11.3" font-weight="400" fill="#000" text-anchor="end"  textLength="12.8" lengthAdjust="spacingAndGlyphs">10</text>
<text x="384.3" y="172" font-size="11.5" font-weight="400" fill="#000" text-anchor="start"  textLength="125.5" lengthAdjust="spacingAndGlyphs">Frequency Minimum (MHz)</text>
<text x="533" y="172" font-size="10.8" font-weight="400" fill="#000" text-anchor="start" >FMin</text>
<rect x="576" y="161" width="57" height="18" fill="#ffffff" />
<rect x="576" y="161" width="57" height="1" fill="#a0a0a0" />
<rect x="576" y="161" width="1" height="18" fill="#a0a0a0" />
<rect x="577" y="162" width="55" height="1" fill="#696969" />
<rect x="577" y="162" width="1" height="16" fill="#696969" />
<rect x="576" y="178" width="57" height="1" fill="#ffffff" />
<rect x="632" y="161" width="1" height="18" fill="#ffffff" />
<rect x="577" y="177" width="55" height="1" fill="#e3e3e3" />
<rect x="631" y="162" width="1" height="16" fill="#e3e3e3" />
<text x="630.5" y="175" font-size="11.3" font-weight="400" fill="#000" text-anchor="end"  textLength="39.5" lengthAdjust="spacingAndGlyphs">500.000</text>
<text x="384.3" y="196" font-size="11.5" font-weight="400" fill="#000" text-anchor="start"  textLength="128.2" lengthAdjust="spacingAndGlyphs">Frequency Maximum (GHz)</text>
<text x="533" y="196" font-size="10.8" font-weight="400" fill="#000" text-anchor="start" >FMax</text>
<rect x="576" y="185" width="57" height="18" fill="#ffffff" />
<rect x="576" y="185" width="57" height="1" fill="#a0a0a0" />
<rect x="576" y="185" width="1" height="18" fill="#a0a0a0" />
<rect x="577" y="186" width="55" height="1" fill="#696969" />
<rect x="577" y="186" width="1" height="16" fill="#696969" />
<rect x="576" y="202" width="57" height="1" fill="#ffffff" />
<rect x="632" y="185" width="1" height="18" fill="#ffffff" />
<rect x="577" y="201" width="55" height="1" fill="#e3e3e3" />
<rect x="631" y="186" width="1" height="16" fill="#e3e3e3" />
<text x="630.5" y="199" font-size="11.3" font-weight="400" fill="#000" text-anchor="end"  textLength="32.9" lengthAdjust="spacingAndGlyphs">10.000</text>
<text x="384.3" y="220" font-size="11.5" font-weight="400" fill="#000" text-anchor="start"  textLength="80.1" lengthAdjust="spacingAndGlyphs">Frequency Steps</text>
<text x="533" y="220" font-size="10.8" font-weight="400" fill="#000" text-anchor="start" >FSteps</text>
<rect x="576" y="209" width="57" height="18" fill="#ffffff" />
<rect x="576" y="209" width="57" height="1" fill="#a0a0a0" />
<rect x="576" y="209" width="1" height="18" fill="#a0a0a0" />
<rect x="577" y="210" width="55" height="1" fill="#696969" />
<rect x="577" y="210" width="1" height="16" fill="#696969" />
<rect x="576" y="226" width="57" height="1" fill="#ffffff" />
<rect x="632" y="209" width="1" height="18" fill="#ffffff" />
<rect x="577" y="225" width="55" height="1" fill="#e3e3e3" />
<rect x="631" y="210" width="1" height="16" fill="#e3e3e3" />
<text x="630.5" y="223" font-size="11.3" font-weight="400" fill="#000" text-anchor="end"  textLength="12.8" lengthAdjust="spacingAndGlyphs">10</text>
<rect x="635" y="97" width="19" height="1" fill="#000" />
<rect x="635" y="121" width="19" height="1" fill="#000" />
<rect x="656" y="89" width="57" height="19" fill="#f0f0f0" />
<rect x="656" y="89" width="57" height="1" fill="#ffffff" />
<rect x="656" y="89" width="1" height="19" fill="#ffffff" />
<rect x="656" y="107" width="57" height="1" fill="#696969" />
<rect x="712" y="89" width="1" height="19" fill="#696969" />
<rect x="657" y="106" width="55" height="1" fill="#a0a0a0" />
<rect x="711" y="90" width="1" height="17" fill="#a0a0a0" />
<text x="684.0" y="101.6" font-size="11.5" font-weight="400" fill="#000" text-anchor="middle"  textLength="23.9" lengthAdjust="spacingAndGlyphs">Set...</text>
<rect x="656" y="113" width="57" height="19" fill="#f0f0f0" />
<rect x="656" y="113" width="57" height="1" fill="#ffffff" />
<rect x="656" y="113" width="1" height="19" fill="#ffffff" />
<rect x="656" y="131" width="57" height="1" fill="#696969" />
<rect x="712" y="113" width="1" height="19" fill="#696969" />
<rect x="657" y="130" width="55" height="1" fill="#a0a0a0" />
<rect x="711" y="114" width="1" height="17" fill="#a0a0a0" />
<text x="684.0" y="125.6" font-size="11.5" font-weight="400" fill="#000" text-anchor="middle"  textLength="46.8" lengthAdjust="spacingAndGlyphs">GoalSeek</text>
<rect x="635" y="170" width="10" height="1" fill="#000" />
<rect x="635" y="218" width="10" height="1" fill="#000" />
<rect x="644" y="170" width="1" height="49" fill="#000" />
<rect x="635" y="194" width="19" height="1" fill="#000" />
<rect x="656" y="185" width="57" height="19" fill="#f0f0f0" />
<rect x="656" y="185" width="57" height="1" fill="#ffffff" />
<rect x="656" y="185" width="1" height="19" fill="#ffffff" />
<rect x="656" y="203" width="57" height="1" fill="#696969" />
<rect x="712" y="185" width="1" height="19" fill="#696969" />
<rect x="657" y="202" width="55" height="1" fill="#a0a0a0" />
<rect x="711" y="186" width="1" height="17" fill="#a0a0a0" />
<text x="684.0" y="197.6" font-size="11.5" font-weight="400" fill="#000" text-anchor="middle"  textLength="23.9" lengthAdjust="spacingAndGlyphs">Set...</text>
<rect x="384" y="235" width="12" height="12" fill="#ffffff" />
<rect x="384" y="235" width="12" height="1" fill="#a0a0a0" />
<rect x="384" y="235" width="1" height="12" fill="#a0a0a0" />
<rect x="385" y="236" width="10" height="1" fill="#696969" />
<rect x="385" y="236" width="1" height="10" fill="#696969" />
<rect x="384" y="246" width="12" height="1" fill="#ffffff" />
<rect x="395" y="235" width="1" height="12" fill="#ffffff" />
<rect x="385" y="245" width="10" height="1" fill="#e3e3e3" />
<rect x="394" y="236" width="1" height="10" fill="#e3e3e3" />
<text x="401.5" y="245" font-size="11.5" font-weight="400" fill="#000" text-anchor="start"  textLength="46.8" lengthAdjust="spacingAndGlyphs">Auto Calc</text>
<rect x="576" y="233" width="57" height="19" fill="#505050" />
<rect x="577" y="234" width="55" height="17" fill="#f0f0f0" />
<rect x="577" y="234" width="55" height="1" fill="#ffffff" />
<rect x="577" y="234" width="1" height="17" fill="#ffffff" />
<rect x="577" y="250" width="55" height="1" fill="#696969" />
<rect x="631" y="234" width="1" height="17" fill="#696969" />
<rect x="578" y="249" width="53" height="1" fill="#a0a0a0" />
<rect x="630" y="235" width="1" height="15" fill="#a0a0a0" />
<rect x="580.5" y="237.5" width="48" height="10" rx="2" fill="none" stroke="#000" stroke-width="1" stroke-dasharray="1,1"/>
<text x="582.5" y="245.5" font-size="11.5" font-weight="400" fill="#000" text-anchor="start"  textLength="43.8" lengthAdjust="spacingAndGlyphs">Calculate</text>
<rect x="732.5" y="55.5" width="274" height="33" fill="none" stroke="#a0a0a0" stroke-width="1"/>
<rect x="733.5" y="56.5" width="274" height="33" fill="none" stroke="#ffffff" stroke-width="1"/>
<rect x="739" y="49" width="132.8" height="12" fill="#f0f0f0" />
<text x="741.5" y="59.5" font-size="11.8" font-weight="700" fill="#000" text-anchor="start"  textLength="127.6" lengthAdjust="spacingAndGlyphs">Frequency Distribution</text>
<circle cx="746.8" cy="74.8" r="5" fill="#ffffff"/>
<path d="M743.4,78.2 A4.8,4.8 0 0 1 750.1999999999999,71.39999999999999" fill="none" stroke="#585858" stroke-width="1.6"/>
<text x="758.1" y="79.3" font-size="11.5" font-weight="400" fill="#000" text-anchor="start"  textLength="54.5" lengthAdjust="spacingAndGlyphs">Logarithmic</text>
<circle cx="862.8" cy="74.8" r="5" fill="#ffffff"/>
<path d="M859.4,78.2 A4.8,4.8 0 0 1 866.1999999999999,71.39999999999999" fill="none" stroke="#585858" stroke-width="1.6"/>
<circle cx="862.8" cy="74.8" r="2" fill="#000"/>
<text x="874.4" y="79.3" font-size="11.5" font-weight="400" fill="#000" text-anchor="start"  textLength="28.8" lengthAdjust="spacingAndGlyphs">Linear</text>
<rect x="732.5" y="99.5" width="274" height="33" fill="none" stroke="#a0a0a0" stroke-width="1"/>
<rect x="733.5" y="100.5" width="274" height="33" fill="none" stroke="#ffffff" stroke-width="1"/>
<rect x="739" y="93" width="117" height="12" fill="#f0f0f0" />
<text x="741.5" y="103.5" font-size="11.8" font-weight="700" fill="#000" text-anchor="start"  textLength="111.8" lengthAdjust="spacingAndGlyphs">Result Presentation</text>
<circle cx="746.8" cy="118.8" r="5" fill="#ffffff"/>
<path d="M743.4,122.2 A4.8,4.8 0 0 1 750.1999999999999,115.39999999999999" fill="none" stroke="#585858" stroke-width="1.6"/>
<circle cx="746.8" cy="118.8" r="2" fill="#000"/>
<text x="758.1" y="123.1" font-size="11.5" font-weight="400" fill="#000" text-anchor="start"  textLength="68.3" lengthAdjust="spacingAndGlyphs">Length of Line</text>
<circle cx="862.8" cy="118.8" r="5" fill="#ffffff"/>
<path d="M859.4,122.2 A4.8,4.8 0 0 1 866.1999999999999,115.39999999999999" fill="none" stroke="#585858" stroke-width="1.6"/>
<text x="874.4" y="123.1" font-size="11.5" font-weight="400" fill="#000" text-anchor="start"  textLength="16.1" lengthAdjust="spacingAndGlyphs">/ in</text>
<circle cx="926.8" cy="118.8" r="5" fill="#ffffff"/>
<path d="M923.4,122.2 A4.8,4.8 0 0 1 930.1999999999999,115.39999999999999" fill="none" stroke="#585858" stroke-width="1.6"/>
<text x="937.5" y="123.1" font-size="11.5" font-weight="400" fill="#000" text-anchor="start"  textLength="16.9" lengthAdjust="spacingAndGlyphs">/ m</text>
<rect x="732.5" y="143.5" width="274" height="68" fill="none" stroke="#a0a0a0" stroke-width="1"/>
<rect x="733.5" y="144.5" width="274" height="68" fill="none" stroke="#ffffff" stroke-width="1"/>
<rect x="739" y="137" width="147" height="12" fill="#f0f0f0" />
<text x="741.5" y="147.5" font-size="11.8" font-weight="700" fill="#000" text-anchor="start"  textLength="141.8" lengthAdjust="spacingAndGlyphs">Extended Substrate Data</text>
<circle cx="746.8" cy="161.8" r="5" fill="#ffffff"/>
<path d="M743.4,165.20000000000002 A4.8,4.8 0 0 1 750.1999999999999,158.4" fill="none" stroke="#585858" stroke-width="1.6"/>
<circle cx="746.8" cy="161.8" r="2" fill="#000"/>
<text x="758.2" y="167" font-size="11.5" font-weight="400" fill="#000" text-anchor="start"  textLength="92.3" lengthAdjust="spacingAndGlyphs">Constant Er / TanD</text>
<circle cx="746.8" cy="177.8" r="5" fill="#ffffff"/>
<path d="M743.4,181.20000000000002 A4.8,4.8 0 0 1 750.1999999999999,174.4" fill="none" stroke="#585858" stroke-width="1.6"/>
<text x="758.2" y="183.1" font-size="11.5" font-weight="400" fill="#000" text-anchor="start"  textLength="145.3" lengthAdjust="spacingAndGlyphs">Causally Extrapolate Er / TanD</text>
<circle cx="746.8" cy="194.3" r="5" fill="#ffffff"/>
<path d="M743.4,197.70000000000002 A4.8,4.8 0 0 1 750.1999999999999,190.9" fill="none" stroke="#585858" stroke-width="1.6"/>
<text x="758.2" y="199.1" font-size="11.5" font-weight="400" fill="#000" text-anchor="start"  textLength="86.5" lengthAdjust="spacingAndGlyphs">Multiple Er / TanD</text>
<rect x="920" y="169" width="57" height="18" fill="#f0f0f0" />
<rect x="920" y="169" width="57" height="1" fill="#ffffff" />
<rect x="920" y="169" width="1" height="18" fill="#ffffff" />
<rect x="920" y="186" width="57" height="1" fill="#696969" />
<rect x="976" y="169" width="1" height="18" fill="#696969" />
<rect x="921" y="185" width="55" height="1" fill="#a0a0a0" />
<rect x="975" y="170" width="1" height="16" fill="#a0a0a0" />
<text x="948.0" y="181.1" font-size="11.5" font-weight="400" fill="#000" text-anchor="middle"  textLength="27.1" lengthAdjust="spacingAndGlyphs">Edit...</text>
<rect x="920" y="189" width="57" height="19" fill="#f0f0f0" />
<rect x="920" y="189" width="57" height="1" fill="#ffffff" />
<rect x="920" y="189" width="1" height="19" fill="#ffffff" />
<rect x="920" y="207" width="57" height="1" fill="#696969" />
<rect x="976" y="189" width="1" height="19" fill="#696969" />
<rect x="921" y="206" width="55" height="1" fill="#a0a0a0" />
<rect x="975" y="190" width="1" height="17" fill="#a0a0a0" />
<text x="948.0" y="201.6" font-size="11.5" font-weight="400" fill="#000" text-anchor="middle"  textLength="27.1" lengthAdjust="spacingAndGlyphs">Edit...</text>
<rect x="980" y="184" width="26" height="26" fill="#f0f0f0" />
<rect x="980" y="184" width="26" height="1" fill="#ffffff" />
<rect x="980" y="184" width="1" height="26" fill="#ffffff" />
<rect x="980" y="209" width="26" height="1" fill="#696969" />
<rect x="1005" y="184" width="1" height="26" fill="#696969" />
<rect x="981" y="208" width="24" height="1" fill="#a0a0a0" />
<rect x="1004" y="185" width="1" height="24" fill="#a0a0a0" />
<g transform="translate(987.0,188) scale(1.0)" fill="#000"><ellipse cx="8.3" cy="2.2" rx="2.9" ry="2.0" transform="rotate(-20 8.3 2.2)"/><path d="M1.2,8.4 L8.2,6.6 L5.4,13.8 Q5.9,14.7 9.5,12.4 L10.1,13.4 Q5.6,17.3 2.3,16.8 Q0.7,16.2 1.5,14.2 L3.9,9.1 L1.3,9.5 z"/></g>
<rect x="732.5" y="223.5" width="274" height="81" fill="none" stroke="#a0a0a0" stroke-width="1"/>
<rect x="733.5" y="224.5" width="274" height="81" fill="none" stroke="#ffffff" stroke-width="1"/>
<rect x="739" y="217" width="199.2" height="12" fill="#f0f0f0" />
<text x="741.5" y="227.5" font-size="11.8" font-weight="700" fill="#000" text-anchor="start"  textLength="194.0" lengthAdjust="spacingAndGlyphs">Surface Roughness Compensation</text>
<circle cx="746.8" cy="242.3" r="5" fill="#ffffff"/>
<path d="M743.4,245.70000000000002 A4.8,4.8 0 0 1 750.1999999999999,238.9" fill="none" stroke="#585858" stroke-width="1.6"/>
<text x="758.2" y="246.3" font-size="11.5" font-weight="400" fill="#000" text-anchor="start"  textLength="36.1" lengthAdjust="spacingAndGlyphs">Smooth</text>
<circle cx="746.8" cy="258.3" r="5" fill="#ffffff"/>
<path d="M743.4,261.7 A4.8,4.8 0 0 1 750.1999999999999,254.9" fill="none" stroke="#585858" stroke-width="1.6"/>
<circle cx="746.8" cy="258.3" r="2" fill="#000"/>
<text x="758.2" y="262.7" font-size="11.5" font-weight="400" fill="#000" text-anchor="start"  textLength="59.5" lengthAdjust="spacingAndGlyphs">Hammerstad</text>
<circle cx="746.8" cy="274.3" r="5" fill="#ffffff"/>
<path d="M743.4,277.7 A4.8,4.8 0 0 1 750.1999999999999,270.90000000000003" fill="none" stroke="#585858" stroke-width="1.6"/>
<text x="758.2" y="278.7" font-size="11.5" font-weight="400" fill="#000" text-anchor="start"  textLength="35.5" lengthAdjust="spacingAndGlyphs">Groisse</text>
<circle cx="746.8" cy="290.3" r="5" fill="#ffffff"/>
<path d="M743.4,293.7 A4.8,4.8 0 0 1 750.1999999999999,286.90000000000003" fill="none" stroke="#585858" stroke-width="1.6"/>
<text x="758.2" y="294.5" font-size="11.5" font-weight="400" fill="#000" text-anchor="start"  textLength="28.3" lengthAdjust="spacingAndGlyphs">Huray</text>
<rect x="875" y="260" width="13" height="1" fill="#000" />
<rect x="875" y="276" width="13" height="1" fill="#000" />
<rect x="887" y="260" width="1" height="17" fill="#000" />
<rect x="887" y="268" width="33" height="1" fill="#000" />
<rect x="873" y="291" width="47" height="1" fill="#000" />
<rect x="920" y="259" width="57" height="18" fill="#f0f0f0" />
<rect x="920" y="259" width="57" height="1" fill="#ffffff" />
<rect x="920" y="259" width="1" height="18" fill="#ffffff" />
<rect x="920" y="276" width="57" height="1" fill="#696969" />
<rect x="976" y="259" width="1" height="18" fill="#696969" />
<rect x="921" y="275" width="55" height="1" fill="#a0a0a0" />
<rect x="975" y="260" width="1" height="16" fill="#a0a0a0" />
<text x="948.0" y="271.1" font-size="11.5" font-weight="400" fill="#000" text-anchor="middle"  textLength="27.1" lengthAdjust="spacingAndGlyphs">Edit...</text>
<rect x="920" y="283" width="57" height="18" fill="#f0f0f0" />
<rect x="920" y="283" width="57" height="1" fill="#ffffff" />
<rect x="920" y="283" width="1" height="18" fill="#ffffff" />
<rect x="920" y="300" width="57" height="1" fill="#696969" />
<rect x="976" y="283" width="1" height="18" fill="#696969" />
<rect x="921" y="299" width="55" height="1" fill="#a0a0a0" />
<rect x="975" y="284" width="1" height="16" fill="#a0a0a0" />
<text x="948.0" y="295.1" font-size="11.5" font-weight="400" fill="#000" text-anchor="middle"  textLength="27.1" lengthAdjust="spacingAndGlyphs">Edit...</text>
<rect x="980" y="277" width="26" height="25" fill="#f0f0f0" />
<rect x="980" y="277" width="26" height="1" fill="#ffffff" />
<rect x="980" y="277" width="1" height="25" fill="#ffffff" />
<rect x="980" y="301" width="26" height="1" fill="#696969" />
<rect x="1005" y="277" width="1" height="25" fill="#696969" />
<rect x="981" y="300" width="24" height="1" fill="#a0a0a0" />
<rect x="1004" y="278" width="1" height="23" fill="#a0a0a0" />
<g transform="translate(987.0,281) scale(1.0)" fill="#000"><ellipse cx="8.3" cy="2.2" rx="2.9" ry="2.0" transform="rotate(-20 8.3 2.2)"/><path d="M1.2,8.4 L8.2,6.6 L5.4,13.8 Q5.9,14.7 9.5,12.4 L10.1,13.4 Q5.6,17.3 2.3,16.8 Q0.7,16.2 1.5,14.2 L3.9,9.1 L1.3,9.5 z"/></g>
<text x="14.7" y="322" font-size="11.3" font-weight="400" fill="#000" text-anchor="start"  textLength="29.6" lengthAdjust="spacingAndGlyphs">Graph</text>
<rect x="49" y="306" width="1" height="23" fill="#8a8a8a" />
<rect x="50" y="306" width="1" height="23" fill="#6a6a6a" />
<rect x="51" y="307" width="1" height="22" fill="#f8f8f8" />
<text x="55.5" y="322" font-size="11.3" font-weight="400" fill="#000" text-anchor="start"  textLength="50.8" lengthAdjust="spacingAndGlyphs">Odd Mode</text>
<rect x="110" y="306" width="1" height="23" fill="#8a8a8a" />
<rect x="111" y="306" width="1" height="23" fill="#6a6a6a" />
<rect x="112" y="307" width="1" height="22" fill="#f8f8f8" />
<text x="122.0" y="322" font-size="11.3" font-weight="400" fill="#000" text-anchor="start"  textLength="55.3" lengthAdjust="spacingAndGlyphs">Even Mode</text>
<rect x="180" y="306" width="1" height="23" fill="#8a8a8a" />
<rect x="181" y="306" width="1" height="23" fill="#6a6a6a" />
<rect x="182" y="307" width="1" height="22" fill="#f8f8f8" />
<text x="190.9" y="322" font-size="11.3" font-weight="400" fill="#000" text-anchor="start"  textLength="63.4" lengthAdjust="spacingAndGlyphs">SPICE RLGC</text>
<rect x="257" y="306" width="1" height="23" fill="#8a8a8a" />
<rect x="258" y="306" width="1" height="23" fill="#6a6a6a" />
<rect x="259" y="307" width="1" height="22" fill="#f8f8f8" />
<text x="266.1" y="322" font-size="11.3" font-weight="400" fill="#000" text-anchor="start"  textLength="132.6" lengthAdjust="spacingAndGlyphs">4 Port S-Parameters - Graph</text>
<rect x="403" y="306" width="1" height="23" fill="#8a8a8a" />
<rect x="404" y="306" width="1" height="23" fill="#6a6a6a" />
<rect x="405" y="307" width="1" height="22" fill="#f8f8f8" />
<text x="412.1" y="322" font-size="11.3" font-weight="400" fill="#000" text-anchor="start"  textLength="126.4" lengthAdjust="spacingAndGlyphs">4 Port S-Parameters - Data</text>
<rect x="543" y="306" width="1" height="23" fill="#8a8a8a" />
<rect x="544" y="306" width="1" height="23" fill="#6a6a6a" />
<rect x="545" y="307" width="1" height="22" fill="#f8f8f8" />
<text x="552.2" y="322" font-size="11.3" font-weight="400" fill="#000" text-anchor="start"  textLength="162.1" lengthAdjust="spacingAndGlyphs">Mixed Mode S-Parameters - Graph</text>
<rect x="719" y="306" width="1" height="23" fill="#8a8a8a" />
<rect x="720" y="306" width="1" height="23" fill="#6a6a6a" />
<rect x="721" y="307" width="1" height="22" fill="#f8f8f8" />
<text x="728.1" y="322" font-size="11.3" font-weight="400" fill="#000" text-anchor="start"  textLength="156.6" lengthAdjust="spacingAndGlyphs">Mixed Mode S-Parameters - Data</text>
<rect x="889" y="306" width="1" height="23" fill="#8a8a8a" />
<rect x="890" y="306" width="1" height="23" fill="#6a6a6a" />
<rect x="891" y="307" width="1" height="22" fill="#f8f8f8" />
<text x="899.9" y="322" font-size="11.3" font-weight="400" fill="#000" text-anchor="start"  textLength="42.8" lengthAdjust="spacingAndGlyphs">Crosstalk</text>
<rect x="946" y="306" width="1" height="23" fill="#8a8a8a" />
<rect x="947" y="306" width="1" height="23" fill="#6a6a6a" />
<rect x="948" y="307" width="1" height="22" fill="#f8f8f8" />
<text x="955.5" y="322" font-size="11.3" font-weight="400" fill="#000" text-anchor="start"  textLength="67.8" lengthAdjust="spacingAndGlyphs">Measurements</text>
<rect x="8" y="335" width="1002" height="1" fill="#a0a0a0" />
<rect x="8" y="335" width="1" height="415" fill="#a0a0a0" />
<rect x="9" y="336" width="1001" height="1" fill="#ffffff" />
<rect x="9" y="336" width="1" height="413" fill="#ffffff" />
<rect x="8" y="749" width="1002" height="1" fill="#a0a0a0" />
<rect x="17" y="343" width="993" height="399" fill="#ffffff" />
<rect x="16" y="342" width="994" height="1" fill="#a0a0a0" />
<rect x="16" y="342" width="1" height="401" fill="#a0a0a0" />
<rect x="17" y="343" width="993" height="1" fill="#696969" />
<rect x="17" y="343" width="1" height="399" fill="#696969" />
<rect x="17" y="742" width="993" height="1" fill="#d8d8d8" />
<rect x="66" y="404" width="929" height="18" fill="#f9f9f9" />
<rect x="66" y="450" width="929" height="27" fill="#f9f9f9" />
<rect x="66" y="505" width="929" height="28" fill="#f9f9f9" />
<rect x="66" y="561" width="929" height="27" fill="#f9f9f9" />
<rect x="66" y="616" width="929" height="28" fill="#f9f9f9" />
<rect x="66" y="672" width="929" height="28" fill="#f9f9f9" />
<rect x="152" y="404" width="1" height="307" fill="#000" />
<rect x="241" y="404" width="1" height="307" fill="#000" />
<rect x="330" y="404" width="1" height="307" fill="#000" />
<rect x="419" y="404" width="1" height="307" fill="#000" />
<rect x="508" y="404" width="1" height="307" fill="#000" />
<rect x="597" y="404" width="1" height="307" fill="#000" />
<rect x="686" y="404" width="1" height="307" fill="#000" />
<rect x="774" y="404" width="1" height="307" fill="#000" />
<rect x="863" y="404" width="1" height="307" fill="#000" />
<rect x="952" y="404" width="1" height="307" fill="#000" />
<rect x="60" y="422" width="936" height="1" fill="#000" />
<rect x="60" y="450" width="936" height="1" fill="#000" />
<rect x="60" y="477" width="936" height="1" fill="#000" />
<rect x="60" y="505" width="936" height="1" fill="#000" />
<rect x="60" y="533" width="936" height="1" fill="#000" />
<rect x="60" y="561" width="936" height="1" fill="#000" />
<rect x="60" y="588" width="936" height="1" fill="#000" />
<rect x="60" y="616" width="936" height="1" fill="#000" />
<rect x="60" y="644" width="936" height="1" fill="#000" />
<rect x="60" y="672" width="936" height="1" fill="#000" />
<rect x="60" y="700" width="936" height="1" fill="#000" />
<rect x="66.5" y="388.5" width="929" height="314" fill="none" stroke="#000" stroke-width="1" shape-rendering="crispEdges"/>
<rect x="66" y="429" width="7" height="1" fill="#000" />
<rect x="66" y="436" width="7" height="1" fill="#000" />
<rect x="66" y="443" width="7" height="1" fill="#000" />
<rect x="66" y="457" width="7" height="1" fill="#000" />
<rect x="66" y="464" width="7" height="1" fill="#000" />
<rect x="66" y="471" width="7" height="1" fill="#000" />
<rect x="66" y="485" width="7" height="1" fill="#000" />
<rect x="66" y="492" width="7" height="1" fill="#000" />
<rect x="66" y="499" width="7" height="1" fill="#000" />
<rect x="66" y="512" width="7" height="1" fill="#000" />
<rect x="66" y="519" width="7" height="1" fill="#000" />
<rect x="66" y="526" width="7" height="1" fill="#000" />
<rect x="66" y="540" width="7" height="1" fill="#000" />
<rect x="66" y="547" width="7" height="1" fill="#000" />
<rect x="66" y="554" width="7" height="1" fill="#000" />
<rect x="66" y="568" width="7" height="1" fill="#000" />
<rect x="66" y="575" width="7" height="1" fill="#000" />
<rect x="66" y="582" width="7" height="1" fill="#000" />
<rect x="66" y="596" width="7" height="1" fill="#000" />
<rect x="66" y="603" width="7" height="1" fill="#000" />
<rect x="66" y="610" width="7" height="1" fill="#000" />
<rect x="66" y="623" width="7" height="1" fill="#000" />
<rect x="66" y="630" width="7" height="1" fill="#000" />
<rect x="66" y="637" width="7" height="1" fill="#000" />
<rect x="66" y="651" width="7" height="1" fill="#000" />
<rect x="66" y="658" width="7" height="1" fill="#000" />
<rect x="66" y="665" width="7" height="1" fill="#000" />
<rect x="66" y="679" width="7" height="1" fill="#000" />
<rect x="66" y="686" width="7" height="1" fill="#000" />
<rect x="66" y="693" width="7" height="1" fill="#000" />
<rect x="66" y="415" width="7" height="1" fill="#000" />
<rect x="66" y="408" width="7" height="1" fill="#000" />
<rect x="81" y="695" width="1" height="6" fill="#000" />
<rect x="99" y="695" width="1" height="6" fill="#000" />
<rect x="117" y="695" width="1" height="6" fill="#000" />
<rect x="135" y="695" width="1" height="6" fill="#000" />
<rect x="170" y="695" width="1" height="6" fill="#000" />
<rect x="188" y="695" width="1" height="6" fill="#000" />
<rect x="206" y="695" width="1" height="6" fill="#000" />
<rect x="224" y="695" width="1" height="6" fill="#000" />
<rect x="259" y="695" width="1" height="6" fill="#000" />
<rect x="277" y="695" width="1" height="6" fill="#000" />
<rect x="295" y="695" width="1" height="6" fill="#000" />
<rect x="312" y="695" width="1" height="6" fill="#000" />
<rect x="348" y="695" width="1" height="6" fill="#000" />
<rect x="366" y="695" width="1" height="6" fill="#000" />
<rect x="383" y="695" width="1" height="6" fill="#000" />
<rect x="401" y="695" width="1" height="6" fill="#000" />
<rect x="437" y="695" width="1" height="6" fill="#000" />
<rect x="455" y="695" width="1" height="6" fill="#000" />
<rect x="472" y="695" width="1" height="6" fill="#000" />
<rect x="490" y="695" width="1" height="6" fill="#000" />
<rect x="526" y="695" width="1" height="6" fill="#000" />
<rect x="543" y="695" width="1" height="6" fill="#000" />
<rect x="561" y="695" width="1" height="6" fill="#000" />
<rect x="579" y="695" width="1" height="6" fill="#000" />
<rect x="615" y="695" width="1" height="6" fill="#000" />
<rect x="632" y="695" width="1" height="6" fill="#000" />
<rect x="650" y="695" width="1" height="6" fill="#000" />
<rect x="668" y="695" width="1" height="6" fill="#000" />
<rect x="703" y="695" width="1" height="6" fill="#000" />
<rect x="721" y="695" width="1" height="6" fill="#000" />
<rect x="739" y="695" width="1" height="6" fill="#000" />
<rect x="757" y="695" width="1" height="6" fill="#000" />
<rect x="792" y="695" width="1" height="6" fill="#000" />
<rect x="810" y="695" width="1" height="6" fill="#000" />
<rect x="828" y="695" width="1" height="6" fill="#000" />
<rect x="846" y="695" width="1" height="6" fill="#000" />
<rect x="881" y="695" width="1" height="6" fill="#000" />
<rect x="899" y="695" width="1" height="6" fill="#000" />
<rect x="917" y="695" width="1" height="6" fill="#000" />
<rect x="934" y="695" width="1" height="6" fill="#000" />
<rect x="970" y="695" width="1" height="6" fill="#000" />
<rect x="988" y="695" width="1" height="6" fill="#000" />
<text x="57.8" y="426.5" font-size="13" font-weight="400" fill="#000" text-anchor="end"  textLength="6.0" lengthAdjust="spacingAndGlyphs">0</text>
<text x="57.8" y="454.5" font-size="13" font-weight="400" fill="#000" text-anchor="end"  textLength="21.4" lengthAdjust="spacingAndGlyphs">-0.2</text>
<text x="57.8" y="481.5" font-size="13" font-weight="400" fill="#000" text-anchor="end"  textLength="21.4" lengthAdjust="spacingAndGlyphs">-0.4</text>
<text x="57.8" y="509.5" font-size="13" font-weight="400" fill="#000" text-anchor="end"  textLength="21.4" lengthAdjust="spacingAndGlyphs">-0.6</text>
<text x="57.8" y="537.5" font-size="13" font-weight="400" fill="#000" text-anchor="end"  textLength="21.4" lengthAdjust="spacingAndGlyphs">-0.8</text>
<text x="57.8" y="565.5" font-size="13" font-weight="400" fill="#000" text-anchor="end"  textLength="21.4" lengthAdjust="spacingAndGlyphs">-1.0</text>
<text x="57.8" y="592.5" font-size="13" font-weight="400" fill="#000" text-anchor="end"  textLength="21.4" lengthAdjust="spacingAndGlyphs">-1.2</text>
<text x="57.8" y="620.5" font-size="13" font-weight="400" fill="#000" text-anchor="end"  textLength="21.4" lengthAdjust="spacingAndGlyphs">-1.4</text>
<text x="57.8" y="648.5" font-size="13" font-weight="400" fill="#000" text-anchor="end"  textLength="21.4" lengthAdjust="spacingAndGlyphs">-1.6</text>
<text x="57.8" y="676.5" font-size="13" font-weight="400" fill="#000" text-anchor="end"  textLength="21.4" lengthAdjust="spacingAndGlyphs">-1.8</text>
<text x="57.8" y="704.5" font-size="13" font-weight="400" fill="#000" text-anchor="end"  textLength="21.4" lengthAdjust="spacingAndGlyphs">-2.0</text>
<text x="152.2" y="722.7" font-size="13" font-weight="400" fill="#000" text-anchor="middle"  textLength="27.8" lengthAdjust="spacingAndGlyphs">1000</text>
<text x="241.2" y="722.7" font-size="13" font-weight="400" fill="#000" text-anchor="middle"  textLength="27.8" lengthAdjust="spacingAndGlyphs">2000</text>
<text x="330.2" y="722.7" font-size="13" font-weight="400" fill="#000" text-anchor="middle"  textLength="27.8" lengthAdjust="spacingAndGlyphs">3000</text>
<text x="419.2" y="722.7" font-size="13" font-weight="400" fill="#000" text-anchor="middle"  textLength="27.8" lengthAdjust="spacingAndGlyphs">4000</text>
<text x="508.2" y="722.7" font-size="13" font-weight="400" fill="#000" text-anchor="middle"  textLength="27.8" lengthAdjust="spacingAndGlyphs">5000</text>
<text x="597.2" y="722.7" font-size="13" font-weight="400" fill="#000" text-anchor="middle"  textLength="27.8" lengthAdjust="spacingAndGlyphs">6000</text>
<text x="686.2" y="722.7" font-size="13" font-weight="400" fill="#000" text-anchor="middle"  textLength="27.8" lengthAdjust="spacingAndGlyphs">7000</text>
<text x="774.2" y="722.7" font-size="13" font-weight="400" fill="#000" text-anchor="middle"  textLength="27.8" lengthAdjust="spacingAndGlyphs">8000</text>
<text x="863.2" y="722.7" font-size="13" font-weight="400" fill="#000" text-anchor="middle"  textLength="27.8" lengthAdjust="spacingAndGlyphs">9000</text>
<text x="952.2" y="722.7" font-size="13" font-weight="400" fill="#000" text-anchor="middle"  textLength="33.8" lengthAdjust="spacingAndGlyphs">10000</text>
<text x="480.1" y="739" font-size="13.5" font-weight="400" fill="#000" text-anchor="start"  textLength="99.2" lengthAdjust="spacingAndGlyphs">Frequency - MHz</text>
<text transform="translate(29.5,552.5) rotate(-90)" x="0" y="0" font-size="14" fill="#000" text-anchor="middle" textLength="227" lengthAdjust="spacingAndGlyphs">All Losses with Roughness - dB/line</text>
<text x="342.7" y="363.3" font-size="21.5" font-weight="400" fill="#000" text-anchor="start"  textLength="352.6" lengthAdjust="spacingAndGlyphs">Diff Offset Coplanar Waveguide 1B1A</text>
<text x="489.4" y="380.6" font-size="13" font-weight="400" fill="#000" text-anchor="start"  textLength="59.1" lengthAdjust="spacingAndGlyphs">Differential</text>
<rect x="69.5" y="393.5" width="43" height="7" fill="#ff0000" stroke="#000" stroke-width="1" shape-rendering="crispEdges"/>
<text x="119.9" y="401.8" font-size="13.5" font-weight="400" fill="#000" text-anchor="start"  textLength="90.9" lengthAdjust="spacingAndGlyphs">Conductor Loss</text>
<rect x="226.5" y="393.5" width="43" height="7" fill="#00aa00" stroke="#000" stroke-width="1" shape-rendering="crispEdges"/>
<text x="276.5" y="401.8" font-size="13.5" font-weight="400" fill="#000" text-anchor="start"  textLength="86.0" lengthAdjust="spacingAndGlyphs">Dielectric Loss</text>
<rect x="378.5" y="393.5" width="43" height="7" fill="#0000ff" stroke="#000" stroke-width="1" shape-rendering="crispEdges"/>
<text x="428.3" y="401.8" font-size="13.5" font-weight="400" fill="#000" text-anchor="start"  textLength="66.0" lengthAdjust="spacingAndGlyphs">Attenuation</text>
<rect x="510.5" y="393.5" width="43" height="7" fill="#ffcc00" stroke="#000" stroke-width="1" shape-rendering="crispEdges"/>
<text x="560.9" y="401.8" font-size="13.5" font-weight="400" fill="#000" text-anchor="start"  textLength="186.8" lengthAdjust="spacingAndGlyphs">Conductor Loss with Roughness</text>
<rect x="763.5" y="393.5" width="43" height="7" fill="#66cccc" stroke="#000" stroke-width="1" shape-rendering="crispEdges"/>
<text x="814.1" y="401.8" font-size="13.5" font-weight="400" fill="#000" text-anchor="start"  textLength="161.7" lengthAdjust="spacingAndGlyphs">Attenuation with Roughness</text>
<polyline points="108.03,435.92 115.12,437.03 122.22,438.07 129.31,439.03 136.41,439.94 143.50,440.81 150.59,441.63 157.69,442.41 164.78,443.17 171.87,443.89 178.97,444.60 186.06,445.27 193.16,445.93 200.25,446.57 207.34,447.19 214.44,447.79 221.53,448.38 228.63,448.96 235.72,449.52 242.81,450.07 249.91,450.61 257.00,451.14 264.10,451.66 271.19,452.16 278.28,452.66 285.38,453.16 292.47,453.64 299.56,454.12 306.66,454.58 313.75,455.05 320.85,455.50 327.94,455.95 335.03,456.40 342.13,456.83 349.22,457.27 356.32,457.69 363.41,458.12 370.50,458.53 377.60,458.95 384.69,459.36 391.78,459.76 398.88,460.16 405.97,460.56 413.07,460.95 420.16,461.34 427.25,461.72 434.35,462.11 441.44,462.49 448.54,462.86 455.63,463.24 462.72,463.61 469.82,463.97 476.91,464.34 484.00,464.70 491.10,465.06 498.19,465.41 505.29,465.77 512.38,466.12 519.47,466.47 526.57,466.82 533.66,467.16 540.76,467.51 547.85,467.85 554.94,468.19 562.04,468.53 569.13,468.86 576.23,469.20 583.32,469.53 590.41,469.86 597.51,470.19 604.60,470.51 611.69,470.84 618.79,471.16 625.88,471.49 632.98,471.81 640.07,472.13 647.16,472.45 654.26,472.76 661.35,473.08 668.45,473.39 675.54,473.71 682.63,474.02 689.73,474.33 696.82,474.64 703.91,474.95 711.01,475.25 718.10,475.56 725.20,475.87 732.29,476.17 739.38,476.47 746.48,476.78 753.57,477.08 760.67,477.38 767.76,477.68 774.85,477.98 781.95,478.28 789.04,478.57 796.13,478.87 803.23,479.17 810.32,479.46 817.42,479.75 824.51,480.05 831.60,480.34 838.70,480.63 845.79,480.92 852.89,481.21 859.98,481.50 867.07,481.79 874.17,482.08 881.26,482.37 888.36,482.66 895.45,482.94 902.54,483.23 909.64,483.52 916.73,483.80 923.82,484.09 930.92,484.37 938.01,484.65 945.11,484.94 952.20,485.22" fill="none" stroke="#ff0000" stroke-width="3" stroke-linejoin="round"/>
<polyline points="108.03,427.65 115.12,428.79 122.22,429.92 129.31,431.02 136.41,432.12 143.50,433.20 150.59,434.28 157.69,435.35 164.78,436.41 171.87,437.46 178.97,438.52 186.06,439.56 193.16,440.61 200.25,441.65 207.34,442.69 214.44,443.72 221.53,444.75 228.63,445.78 235.72,446.81 242.81,447.84 249.91,448.87 257.00,449.89 264.10,450.91 271.19,451.94 278.28,452.96 285.38,453.98 292.47,455.00 299.56,456.02 306.66,457.04 313.75,458.06 320.85,459.07 327.94,460.09 335.03,461.11 342.13,462.13 349.22,463.14 356.32,464.16 363.41,465.18 370.50,466.19 377.60,467.21 384.69,468.23 391.78,469.24 398.88,470.26 405.97,471.28 413.07,472.29 420.16,473.31 427.25,474.33 434.35,475.35 441.44,476.36 448.54,477.38 455.63,478.40 462.72,479.42 469.82,480.44 476.91,481.46 484.00,482.48 491.10,483.50 498.19,484.52 505.29,485.54 512.38,486.56 519.47,487.58 526.57,488.60 533.66,489.62 540.76,490.65 547.85,491.67 554.94,492.69 562.04,493.72 569.13,494.74 576.23,495.77 583.32,496.79 590.41,497.82 597.51,498.84 604.60,499.87 611.69,500.90 618.79,501.93 625.88,502.96 632.98,503.98 640.07,505.01 647.16,506.04 654.26,507.07 661.35,508.10 668.45,509.14 675.54,510.17 682.63,511.20 689.73,512.23 696.82,513.27 703.91,514.30 711.01,515.34 718.10,516.37 725.20,517.41 732.29,518.44 739.38,519.48 746.48,520.52 753.57,521.56 760.67,522.59 767.76,523.63 774.85,524.67 781.95,525.71 789.04,526.75 796.13,527.80 803.23,528.84 810.32,529.88 817.42,530.92 824.51,531.97 831.60,533.01 838.70,534.06 845.79,535.10 852.89,536.15 859.98,537.19 867.07,538.24 874.17,539.29 881.26,540.34 888.36,541.39 895.45,542.44 902.54,543.49 909.64,544.54 916.73,545.59 923.82,546.64 930.92,547.69 938.01,548.74 945.11,549.80 952.20,550.85" fill="none" stroke="#00aa00" stroke-width="3" stroke-linejoin="round"/>
<polyline points="108.03,441.92 115.12,444.11 122.22,446.22 129.31,448.25 136.41,450.23 143.50,452.15 150.59,454.03 157.69,455.87 164.78,457.68 171.87,459.46 178.97,461.21 186.06,462.93 193.16,464.64 200.25,466.32 207.34,467.99 214.44,469.63 221.53,471.26 228.63,472.88 235.72,474.48 242.81,476.07 249.91,477.65 257.00,479.22 264.10,480.77 271.19,482.32 278.28,483.85 285.38,485.38 292.47,486.90 299.56,488.41 306.66,489.91 313.75,491.41 320.85,492.90 327.94,494.38 335.03,495.86 342.13,497.33 349.22,498.79 356.32,500.25 363.41,501.70 370.50,503.15 377.60,504.59 384.69,506.03 391.78,507.47 398.88,508.90 405.97,510.32 413.07,511.75 420.16,513.16 427.25,514.58 434.35,515.99 441.44,517.40 448.54,518.80 455.63,520.20 462.72,521.60 469.82,523.00 476.91,524.39 484.00,525.78 491.10,527.16 498.19,528.55 505.29,529.93 512.38,531.31 519.47,532.68 526.57,534.06 533.66,535.43 540.76,536.80 547.85,538.17 554.94,539.53 562.04,540.90 569.13,542.26 576.23,543.62 583.32,544.98 590.41,546.33 597.51,547.69 604.60,549.04 611.69,550.39 618.79,551.74 625.88,553.09 632.98,554.43 640.07,555.78 647.16,557.12 654.26,558.46 661.35,559.80 668.45,561.14 675.54,562.48 682.63,563.82 689.73,565.15 696.82,566.49 703.91,567.82 711.01,569.15 718.10,570.49 725.20,571.82 732.29,573.14 739.38,574.47 746.48,575.80 753.57,577.13 760.67,578.45 767.76,579.77 774.85,581.10 781.95,582.42 789.04,583.74 796.13,585.06 803.23,586.38 810.32,587.70 817.42,589.02 824.51,590.34 831.60,591.65 838.70,592.97 845.79,594.28 852.89,595.60 859.98,596.91 867.07,598.23 874.17,599.54 881.26,600.85 888.36,602.16 895.45,603.47 902.54,604.78 909.64,606.09 916.73,607.40 923.82,608.71 930.92,610.02 938.01,611.33 945.11,612.63 952.20,613.94" fill="none" stroke="#0000ff" stroke-width="3" stroke-linejoin="round"/>
<polyline points="108.03,448.04 115.12,450.21 122.22,452.23 129.31,454.15 136.41,455.96 143.50,457.69 150.59,459.34 157.69,460.94 164.78,462.47 171.87,463.95 178.97,465.39 186.06,466.78 193.16,468.14 200.25,469.46 207.34,470.75 214.44,472.00 221.53,473.23 228.63,474.43 235.72,475.61 242.81,476.76 249.91,477.90 257.00,479.01 264.10,480.10 271.19,481.17 278.28,482.22 285.38,483.26 292.47,484.28 299.56,485.29 306.66,486.28 313.75,487.26 320.85,488.23 327.94,489.18 335.03,490.12 342.13,491.04 349.22,491.96 356.32,492.86 363.41,493.76 370.50,494.64 377.60,495.51 384.69,496.38 391.78,497.23 398.88,498.08 405.97,498.91 413.07,499.74 420.16,500.56 427.25,501.38 434.35,502.18 441.44,502.98 448.54,503.77 455.63,504.55 462.72,505.32 469.82,506.09 476.91,506.85 484.00,507.61 491.10,508.36 498.19,509.10 505.29,509.84 512.38,510.57 519.47,511.29 526.57,512.01 533.66,512.73 540.76,513.44 547.85,514.14 554.94,514.84 562.04,515.53 569.13,516.22 576.23,516.90 583.32,517.58 590.41,518.26 597.51,518.93 604.60,519.59 611.69,520.25 618.79,520.91 625.88,521.56 632.98,522.21 640.07,522.85 647.16,523.49 654.26,524.13 661.35,524.76 668.45,525.39 675.54,526.01 682.63,526.63 689.73,527.25 696.82,527.86 703.91,528.48 711.01,529.08 718.10,529.69 725.20,530.29 732.29,530.88 739.38,531.48 746.48,532.07 753.57,532.65 760.67,533.24 767.76,533.82 774.85,534.40 781.95,534.97 789.04,535.54 796.13,536.11 803.23,536.68 810.32,537.24 817.42,537.80 824.51,538.36 831.60,538.92 838.70,539.47 845.79,540.02 852.89,540.57 859.98,541.11 867.07,541.66 874.17,542.20 881.26,542.73 888.36,543.27 895.45,543.80 902.54,544.33 909.64,544.86 916.73,545.38 923.82,545.91 930.92,546.43 938.01,546.95 945.11,547.46 952.20,547.98" fill="none" stroke="#ffcc00" stroke-width="3" stroke-linejoin="round"/>
<polyline points="108.03,453.86 115.12,457.22 122.22,460.41 129.31,463.47 136.41,466.42 143.50,469.26 150.59,472.03 157.69,474.72 164.78,477.34 171.87,479.90 178.97,482.41 186.06,484.88 193.16,487.30 200.25,489.68 207.34,492.02 214.44,494.33 221.53,496.60 228.63,498.85 235.72,501.07 242.81,503.26 249.91,505.43 257.00,507.58 264.10,509.70 271.19,511.81 278.28,513.89 285.38,515.96 292.47,518.01 299.56,520.04 306.66,522.05 313.75,524.06 320.85,526.04 327.94,528.02 335.03,529.98 342.13,531.92 349.22,533.86 356.32,535.78 363.41,537.69 370.50,539.59 377.60,541.49 384.69,543.37 391.78,545.24 398.88,547.10 405.97,548.95 413.07,550.80 420.16,552.63 427.25,554.46 434.35,556.28 441.44,558.09 448.54,559.90 455.63,561.69 462.72,563.48 469.82,565.27 476.91,567.04 484.00,568.81 491.10,570.58 498.19,572.34 505.29,574.09 512.38,575.83 519.47,577.57 526.57,579.31 533.66,581.04 540.76,582.76 547.85,584.48 554.94,586.20 562.04,587.91 569.13,589.61 576.23,591.31 583.32,593.01 590.41,594.70 597.51,596.39 604.60,598.07 611.69,599.75 618.79,601.43 625.88,603.10 632.98,604.76 640.07,606.43 647.16,608.09 654.26,609.74 661.35,611.40 668.45,613.05 675.54,614.69 682.63,616.33 689.73,617.97 696.82,619.61 703.91,621.24 711.01,622.87 718.10,624.50 725.20,626.12 732.29,627.74 739.38,629.36 746.48,630.97 753.57,632.59 760.67,634.20 767.76,635.80 774.85,637.41 781.95,639.01 789.04,640.61 796.13,642.21 803.23,643.80 810.32,645.39 817.42,646.98 824.51,648.57 831.60,650.15 838.70,651.74 845.79,653.32 852.89,654.90 859.98,656.47 867.07,658.05 874.17,659.62 881.26,661.19 888.36,662.76 895.45,664.32 902.54,665.89 909.64,667.45 916.73,669.01 923.82,670.57 930.92,672.13 938.01,673.68 945.11,675.23 952.20,676.79" fill="none" stroke="#66cccc" stroke-width="3" stroke-linejoin="round"/>
<rect x="107.03" y="434.92" width="2" height="2" fill="#000"/>
<rect x="200.83" y="445.71" width="2" height="2" fill="#000"/>
<rect x="294.62" y="452.85" width="2" height="2" fill="#000"/>
<rect x="388.42" y="458.63" width="2" height="2" fill="#000"/>
<rect x="482.22" y="463.66" width="2" height="2" fill="#000"/>
<rect x="576.01" y="468.23" width="2" height="2" fill="#000"/>
<rect x="669.81" y="472.50" width="2" height="2" fill="#000"/>
<rect x="763.61" y="476.55" width="2" height="2" fill="#000"/>
<rect x="857.40" y="480.44" width="2" height="2" fill="#000"/>
<rect x="951.20" y="484.22" width="2" height="2" fill="#000"/>
<rect x="107.03" y="426.65" width="2" height="2" fill="#000"/>
<rect x="200.83" y="440.88" width="2" height="2" fill="#000"/>
<rect x="294.62" y="454.45" width="2" height="2" fill="#000"/>
<rect x="388.42" y="467.90" width="2" height="2" fill="#000"/>
<rect x="482.22" y="481.36" width="2" height="2" fill="#000"/>
<rect x="576.01" y="494.88" width="2" height="2" fill="#000"/>
<rect x="669.81" y="508.48" width="2" height="2" fill="#000"/>
<rect x="763.61" y="522.17" width="2" height="2" fill="#000"/>
<rect x="857.40" y="535.96" width="2" height="2" fill="#000"/>
<rect x="951.20" y="549.85" width="2" height="2" fill="#000"/>
<rect x="107.03" y="440.92" width="2" height="2" fill="#000"/>
<rect x="200.83" y="465.69" width="2" height="2" fill="#000"/>
<rect x="294.62" y="486.57" width="2" height="2" fill="#000"/>
<rect x="388.42" y="505.99" width="2" height="2" fill="#000"/>
<rect x="482.22" y="524.62" width="2" height="2" fill="#000"/>
<rect x="576.01" y="542.77" width="2" height="2" fill="#000"/>
<rect x="669.81" y="560.59" width="2" height="2" fill="#000"/>
<rect x="763.61" y="578.19" width="2" height="2" fill="#000"/>
<rect x="857.40" y="595.62" width="2" height="2" fill="#000"/>
<rect x="951.20" y="612.94" width="2" height="2" fill="#000"/>
<rect x="107.03" y="447.04" width="2" height="2" fill="#000"/>
<rect x="200.83" y="468.75" width="2" height="2" fill="#000"/>
<rect x="294.62" y="483.73" width="2" height="2" fill="#000"/>
<rect x="388.42" y="495.95" width="2" height="2" fill="#000"/>
<rect x="482.22" y="506.52" width="2" height="2" fill="#000"/>
<rect x="576.01" y="515.98" width="2" height="2" fill="#000"/>
<rect x="669.81" y="524.60" width="2" height="2" fill="#000"/>
<rect x="763.61" y="532.56" width="2" height="2" fill="#000"/>
<rect x="857.40" y="539.99" width="2" height="2" fill="#000"/>
<rect x="951.20" y="546.98" width="2" height="2" fill="#000"/>
<rect x="107.03" y="452.86" width="2" height="2" fill="#000"/>
<rect x="200.83" y="489.20" width="2" height="2" fill="#000"/>
<rect x="294.62" y="517.91" width="2" height="2" fill="#000"/>
<rect x="388.42" y="543.62" width="2" height="2" fill="#000"/>
<rect x="482.22" y="567.62" width="2" height="2" fill="#000"/>
<rect x="576.01" y="590.50" width="2" height="2" fill="#000"/>
<rect x="669.81" y="612.59" width="2" height="2" fill="#000"/>
<rect x="763.61" y="634.09" width="2" height="2" fill="#000"/>
<rect x="857.40" y="655.12" width="2" height="2" fill="#000"/>
<rect x="951.20" y="675.79" width="2" height="2" fill="#000"/>
<rect x="8" y="749" width="1002" height="1" fill="#a0a0a0" />
<rect x="8" y="750" width="1002" height="1" fill="#ffffff" />
<rect x="4" y="753" width="1006" height="1" fill="#696969" />
<rect x="0" y="759" width="308" height="1" fill="#8c8c8c" />
<rect x="0" y="760" width="308" height="1" fill="#696969" />
<rect x="617" y="759" width="393" height="1" fill="#8c8c8c" />
<rect x="617" y="760" width="393" height="1" fill="#696969" />
<rect x="307" y="760" width="1" height="18" fill="#696969" />
<rect x="617" y="760" width="1" height="18" fill="#696969" />
<rect x="618" y="761" width="1" height="17" fill="#ffffff" />
<rect x="929" y="760" width="1" height="18" fill="#696969" />
<rect x="930" y="761" width="1" height="17" fill="#ffffff" />
<text x="104.2" y="774.5" font-size="11.5" font-weight="400" fill="#000" text-anchor="start"  textLength="98.1" lengthAdjust="spacingAndGlyphs">Lossless Calculation</text>
<text x="370.9" y="773.7" font-size="11.8" font-weight="700" fill="#000" text-anchor="start"  textLength="183.8" lengthAdjust="spacingAndGlyphs">Frequency Dependent Calculation</text>
<text x="726.5" y="774.5" font-size="11.5" font-weight="400" fill="#000" text-anchor="start"  textLength="94.8" lengthAdjust="spacingAndGlyphs">Sensitivity Analysis</text></svg>
</body></html>
